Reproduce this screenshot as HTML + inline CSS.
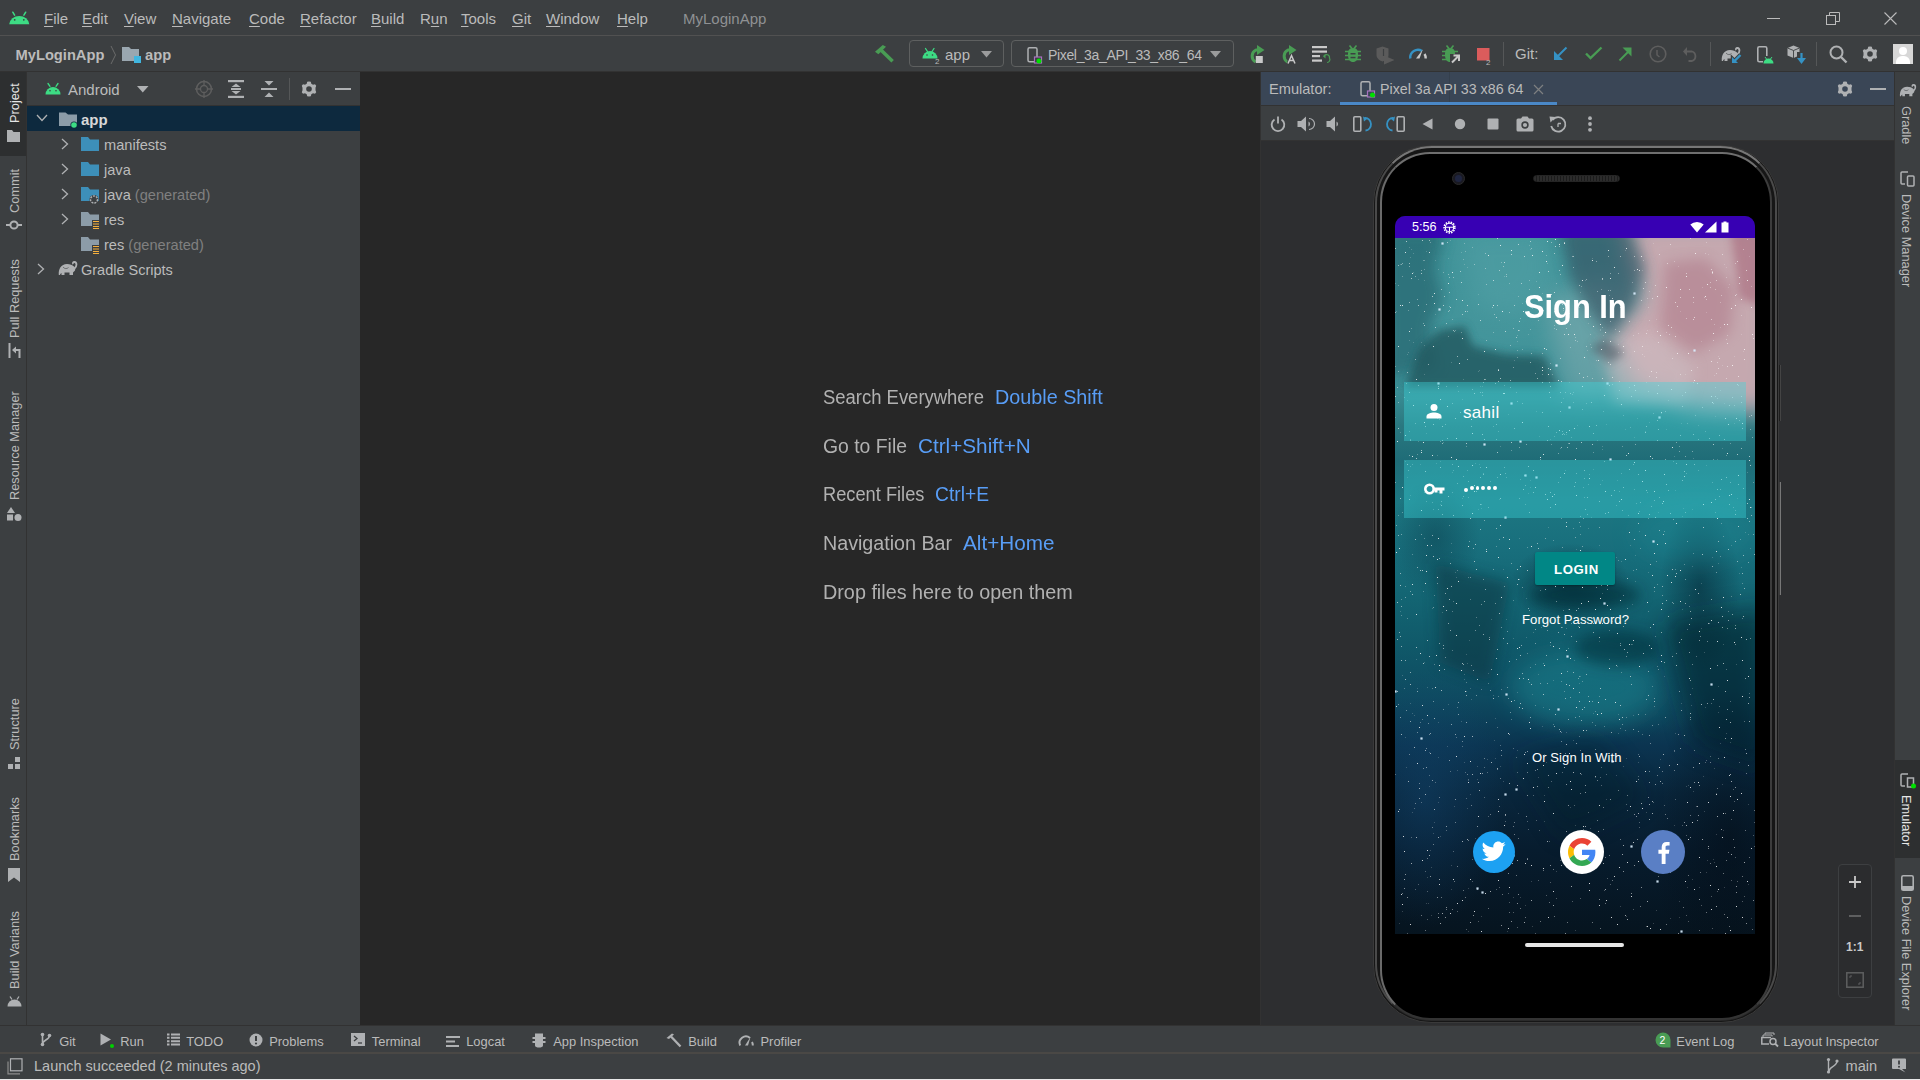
<!DOCTYPE html>
<html><head><meta charset="utf-8">
<style>
*{margin:0;padding:0;box-sizing:border-box}
html,body{width:1920px;height:1080px;overflow:hidden;background:#3c3f41;font-family:"Liberation Sans",sans-serif;color:#bbbbbb}
.a{position:absolute}
.t{position:absolute;font-size:15px;line-height:15px;white-space:nowrap}
.u{text-decoration:underline;text-underline-offset:2px}
svg{position:absolute;overflow:visible}
</style></head><body>
<!-- regions -->
<div class="a" id="menubar" style="left:0;top:0;width:1920px;height:35px;background:#3c3f41"></div>
<div class="a" style="left:0;top:35px;width:1920px;height:1px;background:#515151"></div>
<div class="a" id="navbar" style="left:0;top:36px;width:1920px;height:35px;background:#3c3f41"></div>
<div class="a" style="left:0;top:71px;width:1920px;height:1px;background:#323232"></div>
<!-- left stripe -->
<div class="a" style="left:0;top:72px;width:26px;height:953px;background:#3c3f41"></div>
<div class="a" style="left:0;top:72px;width:26px;height:84px;background:#2d2f30"></div>
<div class="a" style="left:26px;top:72px;width:1px;height:953px;background:#323232"></div>
<!-- project panel -->
<div class="a" style="left:27px;top:72px;width:333px;height:953px;background:#3c3f41"></div>
<div class="a" style="left:27px;top:105px;width:333px;height:1px;background:#323232"></div>
<div class="a" style="left:27px;top:106px;width:333px;height:25px;background:#0d293e"></div>
<!-- editor -->
<div class="a" style="left:360px;top:72px;width:900px;height:953px;background:#272727"></div>
<div class="a" style="left:1260px;top:72px;width:1px;height:953px;background:#323232"></div>
<!-- emulator panel -->
<div class="a" style="left:1261px;top:72px;width:633px;height:33px;background:#3a4656"></div>
<div class="a" style="left:1261px;top:105px;width:633px;height:1px;background:#323232"></div>
<div class="a" style="left:1261px;top:106px;width:633px;height:34px;background:#3c3f41"></div>
<div class="a" style="left:1261px;top:140px;width:633px;height:1px;background:#323232"></div>
<div class="a" style="left:1261px;top:141px;width:633px;height:884px;background:#2d2e30"></div>
<div class="a" style="left:1894px;top:72px;width:1px;height:953px;background:#323232"></div>
<!-- right stripe -->
<div class="a" style="left:1895px;top:72px;width:25px;height:953px;background:#3c3f41"></div>
<!-- bottom -->
<div class="a" style="left:0;top:1025px;width:1920px;height:1px;background:#323232"></div>
<div class="a" style="left:0;top:1026px;width:1920px;height:26px;background:#3c3f41"></div>
<div class="a" style="left:0;top:1052px;width:1920px;height:2px;background:#4a4845"></div>
<div class="a" style="left:0;top:1054px;width:1920px;height:25px;background:#3c3f41"></div>
<div class="a" style="left:0;top:1079px;width:1920px;height:1px;background:#e8e8e8"></div>

<!-- menubar content -->
<svg style="left:9px;top:11px" width="21" height="14" viewBox="0 0 21 14"><path d="M3.8 1.2 L5.6 4.2 M16.7 1.2 L14.9 4.2" stroke="#3ddc84" stroke-width="1.5" stroke-linecap="round"/><path d="M0.2 13.3 A10.1 9.3 0 0 1 20.3 13.3 Z" fill="#3ddc84"/><circle cx="5.7" cy="8.8" r="0.9" fill="#3c3f41"/><circle cx="14.8" cy="8.8" r="0.9" fill="#3c3f41"/></svg>
<div class="t" style="left:44px;top:11px"><span class="u">F</span>ile</div>
<div class="t" style="left:82px;top:11px"><span class="u">E</span>dit</div>
<div class="t" style="left:124px;top:11px"><span class="u">V</span>iew</div>
<div class="t" style="left:172px;top:11px"><span class="u">N</span>avigate</div>
<div class="t" style="left:249px;top:11px"><span class="u">C</span>ode</div>
<div class="t" style="left:300px;top:11px"><span class="u">R</span>efactor</div>
<div class="t" style="left:371px;top:11px"><span class="u">B</span>uild</div>
<div class="t" style="left:420px;top:11px">R<span class="u">u</span>n</div>
<div class="t" style="left:461px;top:11px"><span class="u">T</span>ools</div>
<div class="t" style="left:512px;top:11px"><span class="u">G</span>it</div>
<div class="t" style="left:546px;top:11px"><span class="u">W</span>indow</div>
<div class="t" style="left:617px;top:11px"><span class="u">H</span>elp</div>
<div class="t" style="left:683px;top:11px;color:#8f9193">MyLoginApp</div>
<svg style="left:1767px;top:18px" width="13" height="1"><rect width="13" height="1" fill="#bbb"/></svg>
<svg style="left:1826px;top:12px" width="14" height="13" viewBox="0 0 14 13"><rect x="0.5" y="3.5" width="9" height="9" fill="none" stroke="#bbb"/><path d="M3.5 3.5 V0.5 H13.5 V9.5 H9.5" fill="none" stroke="#bbb"/></svg>
<svg style="left:1884px;top:12px" width="13" height="13" viewBox="0 0 13 13"><path d="M0.5 0.5 L12.5 12.5 M12.5 0.5 L0.5 12.5" stroke="#bbb" stroke-width="1.1"/></svg>

<!-- navbar content -->
<div class="t" style="left:15.5px;top:48px;font-weight:bold;font-size:14.7px">MyLoginApp</div>
<svg style="left:110px;top:45px" width="7" height="20" viewBox="0 0 7 20"><path d="M1 1 L5.5 10 L1 19" fill="none" stroke="#6b6b6b" stroke-width="1"/></svg>
<svg style="left:122px;top:46px" width="20" height="18" viewBox="0 0 20 18"><path d="M0 1 H7 L9 3 H17 V15 H0 Z" fill="#9aa7b0"/><rect x="12" y="10" width="7" height="7" fill="#40b6e0"/></svg>
<div class="t" style="left:145px;top:48px;font-weight:bold;font-size:14.7px">app</div>
<!-- hammer -->
<svg style="left:875px;top:45px" width="20" height="18" viewBox="0 0 20 18"><path d="M0 6.8 L7.8 0 L11 1.8 L3.4 9.2 Z" fill="#499c54"/><path d="M6.2 5.2 L17.6 16.2" stroke="#499c54" stroke-width="3.6"/></svg>
<!-- app combo -->
<div class="a" style="left:909px;top:40px;width:95px;height:27px;border:1.5px solid #5e6060;border-radius:4px"></div>
<svg style="left:922px;top:48px" width="17" height="16" viewBox="0 0 17 16"><path d="M3.5 0.5 L5.5 3.5 M12 0.5 L10 3.5" stroke="#3ddc84" stroke-width="1.3" stroke-linecap="round"/><path d="M0.5 10.5 A7.5 7.5 0 0 1 15.5 10.5 Z" fill="#3ddc84"/><circle cx="5" cy="7" r="0.8" fill="#3c3f41"/><circle cx="10.5" cy="7" r="0.8" fill="#3c3f41"/><text x="13" y="15.5" font-size="8" fill="#bbb" font-family="Liberation Sans">2</text></svg>
<div class="t" style="left:945px;top:47px">app</div>
<svg style="left:981px;top:51px" width="12" height="7" viewBox="0 0 12 7"><path d="M0 0 H11 L5.5 6.5 Z" fill="#9a9b9c"/></svg>
<!-- device combo -->
<div class="a" style="left:1011px;top:40px;width:223px;height:27px;border:1.5px solid #5e6060;border-radius:4px"></div>
<svg style="left:1027px;top:47px" width="16" height="18" viewBox="0 0 16 18"><rect x="1" y="0.8" width="9" height="14" rx="1.5" fill="none" stroke="#afb1b3" stroke-width="1.5"/><rect x="7.5" y="10" width="7" height="6" fill="#3c3f41" stroke="#a771bf" stroke-width="1.2"/><circle cx="12" cy="14" r="2.5" fill="#00e000"/></svg>
<div class="t" style="left:1048px;top:48px;font-size:14px;letter-spacing:-0.34px">Pixel_3a_API_33_x86_64</div>
<svg style="left:1210px;top:51px" width="12" height="7" viewBox="0 0 12 7"><path d="M0 0 H11 L5.5 6.5 Z" fill="#9a9b9c"/></svg>
<!-- toolbar icons -->
<svg style="left:1247px;top:45px" width="18" height="19" viewBox="0 0 18 19"><path d="M8.5 17 A6.8 6.8 0 0 1 9 5 H11" fill="none" stroke="#499c54" stroke-width="3"/><path d="M10 0 L17.5 5 L10 10 Z" fill="#499c54"/><rect x="8.8" y="11" width="7" height="7" fill="#c9c9c9"/></svg>
<svg style="left:1279px;top:45px" width="18" height="19" viewBox="0 0 18 19"><path d="M8.5 17 A6.8 6.8 0 0 1 9 5 H11" fill="none" stroke="#499c54" stroke-width="3"/><path d="M10 0 L17.5 5 L10 10 Z" fill="#499c54"/><rect x="8.5" y="10.5" width="8" height="8" fill="#3c3f41"/><path d="M9 18.5 L12.5 10.5 L16 18.5 M10.3 15.5 H14.7" fill="none" stroke="#c9c9c9" stroke-width="1.5"/></svg>
<svg style="left:1312px;top:46px" width="19" height="18" viewBox="0 0 19 18"><rect x="0" y="0" width="15" height="2.2" fill="#c9c9c9"/><rect x="0" y="4.5" width="15" height="2.2" fill="#c9c9c9"/><rect x="0" y="9" width="8" height="2.2" fill="#c9c9c9"/><rect x="0" y="13.5" width="10" height="2.2" fill="#c9c9c9"/><path d="M12 10 A3 3 0 0 1 17.5 12 A3 3 0 0 1 15 16.5" fill="none" stroke="#499c54" stroke-width="1.2"/><path d="M11 10.2 L13.5 8 L13.5 12.5 Z" fill="#499c54"/></svg>
<svg style="left:1345px;top:45px" width="16" height="18" viewBox="0 0 16 18"><path d="M4.5 0.5 L7 3.5 M11.5 0.5 L9 3.5" stroke="#499c54" stroke-width="1.6"/><path d="M8 3 C3.5 3 3 6 3 10 C3 14.5 5 17 8 17 C11 17 13 14.5 13 10 C13 6 12.5 3 8 3 Z" fill="#499c54"/><path d="M0 6.5 H16 M0 10.5 H16 M0 14.5 H16" stroke="#499c54" stroke-width="1.5"/><rect x="5.5" y="8" width="5" height="1.5" fill="#3c3f41"/><rect x="5.5" y="11.8" width="5" height="1.5" fill="#3c3f41"/></svg>
<svg style="left:1376px;top:46px" width="20" height="19" viewBox="0 0 20 19"><path d="M0.5 2.5 L6.5 0.5 L12.5 2.5 V9 C12.5 12 10 14.5 6.5 15.5 C3 14.5 0.5 12 0.5 9 Z" fill="#5b5b5b"/><path d="M8 9.5 L18.5 14 L8 18.5 Z" fill="#5b5b5b"/><path d="M7.5 3 V10" stroke="#3c3f41" stroke-width="1.2"/></svg>
<svg style="left:1409px;top:47px" width="18" height="12" viewBox="0 0 18 12"><path d="M1.3 11.5 A7.7 7.7 0 0 1 13 4" fill="none" stroke="#3592c4" stroke-width="2.4"/><path d="M16.7 11.5 A7.7 7.7 0 0 0 15.5 7" fill="none" stroke="#c9c9c9" stroke-width="2.4"/><path d="M7 11.5 L13.8 2.5 L10.5 11.5 Z" fill="#c9c9c9"/></svg>
<svg style="left:1442px;top:45px" width="19" height="19" viewBox="0 0 19 19"><path d="M4.5 0.5 L7 3.5 M11.5 0.5 L9 3.5" stroke="#499c54" stroke-width="1.6"/><path d="M8 3 C3.5 3 3 6 3 10 C3 14.5 5 17 8 17 C11 17 13 14.5 13 10 C13 6 12.5 3 8 3 Z" fill="#499c54"/><path d="M0 6.5 H16 M0 10.5 H8 M0 14.5 H8" stroke="#499c54" stroke-width="1.5"/><rect x="8" y="9" width="11" height="10" fill="#3c3f41"/><path d="M10 17.5 L16.5 11 M11.5 10.5 H17 V16" fill="none" stroke="#c9c9c9" stroke-width="2"/></svg>
<svg style="left:1477px;top:48px" width="14" height="17" viewBox="0 0 14 17"><rect x="0" y="0" width="12.5" height="12.5" fill="#db5c5c"/><text x="9" y="16.5" font-size="8" fill="#bbb" font-family="Liberation Sans">2</text></svg>
<div class="a" style="left:1503px;top:42px;width:1px;height:24px;background:#555758"></div>
<div class="t" style="left:1515px;top:46px">Git:</div>
<svg style="left:1553px;top:46px" width="15" height="15" viewBox="0 0 15 15"><path d="M13.5 1.5 L3 12" stroke="#3592c4" stroke-width="2"/><path d="M1 5 V14 H10 Z" fill="#3592c4"/></svg>
<svg style="left:1585px;top:46px" width="18" height="15" viewBox="0 0 18 15"><path d="M1 7.5 L5.5 12 L16.5 1.5" fill="none" stroke="#499c54" stroke-width="2.4"/></svg>
<svg style="left:1618px;top:47px" width="15" height="15" viewBox="0 0 15 15"><path d="M1.5 13.5 L12 3" stroke="#499c54" stroke-width="2"/><path d="M4.5 0.5 H13.5 V9.5 Z" fill="#499c54"/></svg>
<svg style="left:1649px;top:45px" width="18" height="18" viewBox="0 0 18 18"><circle cx="9" cy="9" r="7.8" fill="none" stroke="#5e5e5e" stroke-width="1.6"/><path d="M8 5 V10 L10.5 12" fill="none" stroke="#5e5e5e" stroke-width="1.5"/></svg>
<svg style="left:1683px;top:45px" width="16" height="17" viewBox="0 0 16 17"><path d="M3 6.5 H9 A5 5 0 0 1 9 16 H5.5" fill="none" stroke="#5e5e5e" stroke-width="1.8"/><path d="M0 6.5 L4 2 V11 Z" fill="#5e5e5e"/></svg>
<div class="a" style="left:1710px;top:42px;width:1px;height:24px;background:#555758"></div>
<svg style="left:1721px;top:46px" width="20" height="18" viewBox="0 0 20 18"><path d="M0.8 15 C0.3 9 3 4 9 4 C12 4 14.5 5 16 6.5 C17 7.5 17.5 9 17 10.5 L15 12.5 V15 H11.5 V12.5 H6.5 V15 H3.5 V13 C2.5 13.5 2 14.2 2 15 Z" fill="#afb1b3"/><path d="M16.5 8.5 C19.2 6.5 19 2.2 16.5 2 C15 1.9 14.5 3.2 15.3 4" fill="none" stroke="#afb1b3" stroke-width="1.8"/><path d="M5 7 C6.5 9 9 9 10.5 7.5" fill="none" stroke="#3c3f41" stroke-width="0.6"/><path d="M19.5 9 L13 15.5" stroke="#3c3f41" stroke-width="4.5"/><path d="M10.5 10 V17.5 H18 Z" fill="#3c3f41" stroke="#3c3f41" stroke-width="1.5"/><path d="M19.5 9 L13 15.5" stroke="#3592c4" stroke-width="2.4"/><path d="M11 11 V17 H17 Z" fill="#3592c4"/></svg>
<svg style="left:1757px;top:46px" width="17" height="18" viewBox="0 0 17 18"><rect x="0.8" y="0.8" width="9" height="15" rx="1.5" fill="none" stroke="#afb1b3" stroke-width="1.6"/><rect x="6" y="10" width="11" height="8" fill="#3c3f41"/><path d="M6.5 17.5 A5 5 0 0 1 16.5 17.5 Z" fill="#3ddc84"/><path d="M8 11 L9.5 13 M15 11 L13.5 13" stroke="#3ddc84" stroke-width="1"/></svg>
<svg style="left:1787px;top:45px" width="20" height="20" viewBox="0 0 20 20"><path d="M6.5 0.5 L12.5 3 V10.5 L6.5 13 L0.5 10.5 V3 Z" fill="#afb1b3"/><path d="M0.5 3 L6.5 5.5 L12.5 3 M6.5 5.5 V13" fill="none" stroke="#3c3f41" stroke-width="0.9"/><rect x="10" y="7" width="10" height="13" fill="#3c3f41"/><path d="M14.5 8 V16" stroke="#3592c4" stroke-width="2.2"/><path d="M10 13 L14.5 19 L19 13 Z" fill="#3592c4"/></svg>
<div class="a" style="left:1816px;top:42px;width:1px;height:24px;background:#555758"></div>
<svg style="left:1829px;top:45px" width="19" height="19" viewBox="0 0 19 19"><circle cx="7.5" cy="7.5" r="6" fill="none" stroke="#afb1b3" stroke-width="2"/><path d="M12 12 L17.5 17.5" stroke="#afb1b3" stroke-width="2.4"/></svg>
<svg style="left:1862px;top:46px" width="16" height="16" viewBox="0 0 16 16"><path d="M8 0.5 L9.8 0.8 L10.3 2.8 L12 3.8 L14 3.2 L15.2 4.8 L14.5 6.8 V9.2 L15.2 11.2 L14 12.8 L12 12.2 L10.3 13.2 L9.8 15.2 L8 15.5 L6.2 15.2 L5.7 13.2 L4 12.2 L2 12.8 L0.8 11.2 L1.5 9.2 V6.8 L0.8 4.8 L2 3.2 L4 3.8 L5.7 2.8 L6.2 0.8 Z" fill="#afb1b3"/><circle cx="8" cy="8" r="2.8" fill="#3c3f41"/></svg>
<div class="a" style="left:1893px;top:44px;width:20px;height:20px;background:#d7d7d7;overflow:hidden"><div class="a" style="left:6px;top:3px;width:8px;height:8px;border-radius:50%;background:#fff"></div><div class="a" style="left:3px;top:12px;width:14px;height:10px;border-radius:6px 6px 0 0;background:#fff"></div></div>

<!-- left stripe content -->
<div class="t" style="left:9px;top:122.5px;transform-origin:0 0;transform:rotate(-90deg);font-size:12.8px;line-height:12.8px;color:#e6e6e6">Project</div>
<div class="t" style="left:9px;top:212.5px;transform-origin:0 0;transform:rotate(-90deg);font-size:12.8px;line-height:12.8px">Commit</div>
<div class="t" style="left:9px;top:337.5px;transform-origin:0 0;transform:rotate(-90deg);font-size:12.8px;line-height:12.8px">Pull Requests</div>
<div class="t" style="left:9px;top:500.0px;transform-origin:0 0;transform:rotate(-90deg);font-size:12.8px;line-height:12.8px">Resource Manager</div>
<div class="t" style="left:9px;top:749.6px;transform-origin:0 0;transform:rotate(-90deg);font-size:12.8px;line-height:12.8px">Structure</div>
<div class="t" style="left:9px;top:860.7px;transform-origin:0 0;transform:rotate(-90deg);font-size:12.8px;line-height:12.8px">Bookmarks</div>
<div class="t" style="left:9px;top:989.0px;transform-origin:0 0;transform:rotate(-90deg);font-size:12.8px;line-height:12.8px">Build Variants</div>
<svg style="left:7px;top:130px" width="13" height="12" viewBox="0 0 13 12"><path d="M0 0 H5 L6.5 2 H13 V12 H0 Z" fill="#afb1b3"/></svg>
<svg style="left:6px;top:219px" width="16" height="12" viewBox="0 0 16 12"><circle cx="8" cy="6" r="3.6" fill="none" stroke="#afb1b3" stroke-width="2"/><path d="M0 6 H4 M12 6 H16" stroke="#afb1b3" stroke-width="2"/></svg>
<svg style="left:8px;top:343px" width="13" height="15" viewBox="0 0 13 15"><path d="M1.5 0 V15" stroke="#afb1b3" stroke-width="2"/><path d="M11.5 15 V7 H5" fill="none" stroke="#afb1b3" stroke-width="2"/><path d="M4 3.5 L8 7 L4 10.5 Z" fill="#afb1b3" transform="rotate(180 6 7)"/></svg>
<svg style="left:7px;top:507px" width="15" height="14" viewBox="0 0 15 14"><path d="M4 0 L8 6 H0 Z" fill="#afb1b3"/><rect x="0" y="7.5" width="6" height="6" fill="#afb1b3"/><circle cx="11" cy="10.5" r="3.5" fill="#afb1b3"/></svg>
<svg style="left:8px;top:757px" width="13" height="13" viewBox="0 0 13 13"><rect x="7" y="0" width="5" height="5" fill="#afb1b3"/><rect x="0" y="7" width="5" height="5" fill="#afb1b3"/><rect x="7" y="7" width="5" height="5" fill="#afb1b3"/></svg>
<svg style="left:8px;top:868px" width="12" height="14" viewBox="0 0 12 14"><path d="M0 0 H12 V14 L6 9.5 L0 14 Z" fill="#afb1b3"/></svg>
<svg style="left:7px;top:996px" width="15" height="11" viewBox="0 0 15 11"><path d="M3 0.5 L5 3.5 M12 0.5 L10 3.5" stroke="#afb1b3" stroke-width="1.3"/><path d="M0.5 10.5 A7 7 0 0 1 14.5 10.5 Z" fill="#afb1b3"/></svg>
<!-- project panel header -->
<svg style="left:45px;top:83px" width="16" height="12" viewBox="0 0 16 12"><path d="M3 0.5 L5 3.3 M13 0.5 L11 3.3" stroke="#3ddc84" stroke-width="1.3" stroke-linecap="round"/><path d="M0.5 11.5 A7.5 7.5 0 0 1 15.5 11.5 Z" fill="#3ddc84"/><circle cx="5" cy="7.8" r="0.8" fill="#3c3f41"/><circle cx="11" cy="7.8" r="0.8" fill="#3c3f41"/></svg>
<div class="t" style="left:68px;top:82px">Android</div>
<svg style="left:137px;top:86px" width="12" height="7" viewBox="0 0 12 7"><path d="M0 0 H11.5 L5.75 6.5 Z" fill="#afb1b3"/></svg>
<svg style="left:195px;top:80px" width="18" height="18" viewBox="0 0 18 18"><circle cx="9" cy="9" r="7.5" fill="none" stroke="#5e5e5e" stroke-width="1.5"/><circle cx="9" cy="9" r="3.5" fill="none" stroke="#5e5e5e" stroke-width="1.3"/><path d="M9 0 V5 M9 13 V18 M0 9 H5 M13 9 H18" stroke="#5e5e5e" stroke-width="1.3"/></svg>
<svg style="left:228px;top:80px" width="16" height="18" viewBox="0 0 16 18"><rect x="0" y="0" width="16" height="2.2" fill="#afb1b3"/><rect x="0" y="15.8" width="16" height="2.2" fill="#afb1b3"/><path d="M3.5 7 L8 3.5 L12.5 7 Z M3.5 11 L8 14.5 L12.5 11 Z" fill="#afb1b3"/><rect x="3" y="8" width="10" height="2" fill="#afb1b3"/></svg>
<svg style="left:261px;top:80px" width="16" height="18" viewBox="0 0 16 18"><rect x="0" y="8" width="16" height="2" fill="#afb1b3"/><path d="M3.5 1 L8 5.5 L12.5 1 Z M3.5 17 L8 12.5 L12.5 17 Z" fill="#afb1b3"/></svg>
<div class="a" style="left:289px;top:78px;width:1px;height:22px;background:#555758"></div>
<svg style="left:301px;top:81px" width="16" height="16" viewBox="0 0 16 16"><path d="M8 0.5 L9.8 0.8 L10.3 2.8 L12 3.8 L14 3.2 L15.2 4.8 L14.5 6.8 V9.2 L15.2 11.2 L14 12.8 L12 12.2 L10.3 13.2 L9.8 15.2 L8 15.5 L6.2 15.2 L5.7 13.2 L4 12.2 L2 12.8 L0.8 11.2 L1.5 9.2 V6.8 L0.8 4.8 L2 3.2 L4 3.8 L5.7 2.8 L6.2 0.8 Z" fill="#afb1b3"/><circle cx="8" cy="8" r="2.8" fill="#3c3f41"/></svg>
<div class="a" style="left:335px;top:88px;width:16px;height:2px;background:#afb1b3"></div>
<!-- tree -->
<svg style="left:36px;top:114px" width="12" height="8" viewBox="0 0 12 8"><path d="M1 1 L6 6.5 L11 1" fill="none" stroke="#afb1b3" stroke-width="1.3"/></svg>
<svg style="left:59px;top:112px" width="20" height="17" viewBox="0 0 20 17"><path d="M0 0.5 H6.5 L9 2.5 H18 V14 H0 Z" fill="#8c9ca8"/><circle cx="15" cy="13" r="3.6" fill="#0d293e"/><circle cx="15" cy="13" r="2.8" fill="#3ddc84"/></svg>
<div class="t" style="left:81px;top:112px;font-weight:bold;color:#d8d8d8">app</div>
<svg style="left:61px;top:138px" width="8" height="12" viewBox="0 0 8 12"><path d="M1 1 L6.5 6 L1 11" fill="none" stroke="#afb1b3" stroke-width="1.3"/></svg>
<svg style="left:81px;top:137px" width="20" height="17" viewBox="0 0 20 17"><path d="M0 0 H7 L9 2.5 H18 V14 H0 Z" fill="#3d8fb9"/></svg>
<div class="t" style="left:104px;top:138px;font-size:14.6px">manifests<span style="color:#808080"></span></div>
<svg style="left:61px;top:163px" width="8" height="12" viewBox="0 0 8 12"><path d="M1 1 L6.5 6 L1 11" fill="none" stroke="#afb1b3" stroke-width="1.3"/></svg>
<svg style="left:81px;top:162px" width="20" height="17" viewBox="0 0 20 17"><path d="M0 0 H7 L9 2.5 H18 V14 H0 Z" fill="#3d8fb9"/></svg>
<div class="t" style="left:104px;top:163px;font-size:14.6px">java<span style="color:#808080"></span></div>
<svg style="left:61px;top:188px" width="8" height="12" viewBox="0 0 8 12"><path d="M1 1 L6.5 6 L1 11" fill="none" stroke="#afb1b3" stroke-width="1.3"/></svg>
<svg style="left:81px;top:187px" width="20" height="17" viewBox="0 0 20 17"><path d="M0 0 H7 L9 2.5 H18 V14 H0 Z" fill="#3d8fb9"/><circle cx="13" cy="12.5" r="4.5" fill="#3c3f41"/><circle cx="13" cy="12.5" r="3.5" fill="none" stroke="#afb1b3" stroke-width="1.4" stroke-dasharray="2 1"/></svg>
<div class="t" style="left:104px;top:188px;font-size:14.6px">java<span style="color:#808080"> (generated)</span></div>
<svg style="left:61px;top:213px" width="8" height="12" viewBox="0 0 8 12"><path d="M1 1 L6.5 6 L1 11" fill="none" stroke="#afb1b3" stroke-width="1.3"/></svg>
<svg style="left:81px;top:212px" width="20" height="17" viewBox="0 0 20 17"><path d="M0 0 H7 L9 2.5 H18 V14 H0 Z" fill="#8c9ca8"/><rect x="11" y="8" width="8" height="9" fill="#3c3f41"/><path d="M12 9.5 H18 M12 12 H18 M12 14.5 H18 M12 16.5 H18" stroke="#f4af3d" stroke-width="1.2"/></svg>
<div class="t" style="left:104px;top:213px;font-size:14.6px">res<span style="color:#808080"></span></div>
<svg style="left:81px;top:237px" width="20" height="17" viewBox="0 0 20 17"><path d="M0 0 H7 L9 2.5 H18 V14 H0 Z" fill="#8c9ca8"/><rect x="11" y="8" width="8" height="9" fill="#3c3f41"/><path d="M12 9.5 H18 M12 12 H18 M12 14.5 H18 M12 16.5 H18" stroke="#f4af3d" stroke-width="1.2"/></svg>
<div class="t" style="left:104px;top:238px;font-size:14.6px">res<span style="color:#808080"> (generated)</span></div>
<svg style="left:37px;top:263px" width="8" height="12" viewBox="0 0 8 12"><path d="M1 1 L6.5 6 L1 11" fill="none" stroke="#afb1b3" stroke-width="1.3"/></svg>
<svg style="left:58px;top:261px" width="20" height="16" viewBox="0 0 20 16"><g transform="translate(0,-1)"><path d="M0.8 15 C0.3 9 3 4 9 4 C12 4 14.5 5 16 6.5 C17 7.5 17.5 9 17 10.5 L15 12.5 V15 H11.5 V12.5 H6.5 V15 H3.5 V13 C2.5 13.5 2 14.2 2 15 Z" fill="#afb1b3"/><path d="M16.5 8.5 C19.2 6.5 19 2.2 16.5 2 C15 1.9 14.5 3.2 15.3 4" fill="none" stroke="#afb1b3" stroke-width="1.8"/><path d="M5 7 C6.5 9 9 9 10.5 7.5" fill="none" stroke="#3c3f41" stroke-width="0.6"/></g></svg>
<div class="t" style="left:81px;top:263px;font-size:14.5px">Gradle Scripts</div>

<!-- right stripe -->
<div class="a" style="left:1895px;top:760px;width:25px;height:98px;background:#2d2f30"></div>
<svg style="left:1899px;top:84px" width="18" height="14" viewBox="0 0 20 16"><g transform="translate(0,-1)"><path d="M0.8 15 C0.3 9 3 4 9 4 C12 4 14.5 5 16 6.5 C17 7.5 17.5 9 17 10.5 L15 12.5 V15 H11.5 V12.5 H6.5 V15 H3.5 V13 C2.5 13.5 2 14.2 2 15 Z" fill="#afb1b3"/><path d="M16.5 8.5 C19.2 6.5 19 2.2 16.5 2 C15 1.9 14.5 3.2 15.3 4" fill="none" stroke="#afb1b3" stroke-width="1.8"/><path d="M5 7 C6.5 9 9 9 10.5 7.5" fill="none" stroke="#3c3f41" stroke-width="0.6"/></g></svg>
<div class="t" style="left:1912px;top:106px;transform-origin:0 0;transform:rotate(90deg);font-size:12.8px;line-height:12.8px">Gradle</div>
<svg style="left:1900px;top:171px" width="15" height="16" viewBox="0 0 15 16"><path d="M8 1 H2 A1 1 0 0 0 1 2 V12 A1 1 0 0 0 2 13 H5" fill="none" stroke="#afb1b3" stroke-width="1.5"/><rect x="7.5" y="5" width="6.5" height="10" rx="1" fill="none" stroke="#afb1b3" stroke-width="1.5"/></svg>
<div class="t" style="left:1912px;top:193.5px;transform-origin:0 0;transform:rotate(90deg);font-size:12.8px;line-height:12.8px">Device Manager</div>
<svg style="left:1900px;top:773px" width="16" height="16" viewBox="0 0 16 16"><path d="M8 1 H2 A1 1 0 0 0 1 2 V12 A1 1 0 0 0 2 13 H5" fill="none" stroke="#afb1b3" stroke-width="1.5"/><rect x="7.5" y="5" width="6" height="9" fill="none" stroke="#afb1b3" stroke-width="1.5"/><circle cx="13.5" cy="13" r="2.5" fill="#00e000"/></svg>
<div class="t" style="left:1912px;top:795px;transform-origin:0 0;transform:rotate(90deg);font-size:12.8px;line-height:12.8px;color:#e6e6e6">Emulator</div>
<svg style="left:1901px;top:875px" width="13" height="16" viewBox="0 0 13 16"><rect x="0.8" y="0.8" width="11.4" height="14.4" rx="1.5" fill="none" stroke="#afb1b3" stroke-width="1.6"/><rect x="0.8" y="11" width="11.4" height="4" fill="#afb1b3"/></svg>
<div class="t" style="left:1912px;top:896px;transform-origin:0 0;transform:rotate(90deg);font-size:12.8px;line-height:12.8px">Device File Explorer</div>
<!-- editor hints -->
<div class="a" style="left:823.1px;top:388px;font-size:19.5px;line-height:19.5px;white-space:nowrap;color:#b1b1b1;transform-origin:0 0;transform:scaleX(0.9462)">Search Everywhere</div>
<div class="a" style="left:995.1px;top:388px;font-size:19.5px;line-height:19.5px;white-space:nowrap;color:#589df6;transform-origin:0 0;transform:scaleX(1.0139)">Double Shift</div>
<div class="a" style="left:823.1px;top:437px;font-size:19.5px;line-height:19.5px;white-space:nowrap;color:#b1b1b1;transform-origin:0 0;transform:scaleX(0.9938)">Go to File</div>
<div class="a" style="left:917.5px;top:437px;font-size:19.5px;line-height:19.5px;white-space:nowrap;color:#589df6;transform-origin:0 0;transform:scaleX(1.0621)">Ctrl+Shift+N</div>
<div class="a" style="left:823.1px;top:485px;font-size:19.5px;line-height:19.5px;white-space:nowrap;color:#b1b1b1;transform-origin:0 0;transform:scaleX(0.9357)">Recent Files</div>
<div class="a" style="left:934.9px;top:485px;font-size:19.5px;line-height:19.5px;white-space:nowrap;color:#589df6;transform-origin:0 0;transform:scaleX(0.9868)">Ctrl+E</div>
<div class="a" style="left:823.1px;top:534px;font-size:19.5px;line-height:19.5px;white-space:nowrap;color:#b1b1b1;transform-origin:0 0;transform:scaleX(1.0086)">Navigation Bar</div>
<div class="a" style="left:962.7px;top:534px;font-size:19.5px;line-height:19.5px;white-space:nowrap;color:#589df6;transform-origin:0 0;transform:scaleX(1.0620)">Alt+Home</div>
<div class="a" style="left:823.1px;top:583px;font-size:19.5px;line-height:19.5px;white-space:nowrap;color:#b1b1b1;transform-origin:0 0;transform:scaleX(1.0145)">Drop files here to open them</div>
<!-- emulator header -->
<div class="a" style="left:1449px;top:72px;width:1px;height:33px;background:#35404d"></div>
<div class="t" style="left:1269px;top:82px;font-size:14.6px">Emulator:</div>
<svg style="left:1360px;top:81px" width="17" height="17" viewBox="0 0 17 17"><rect x="1" y="0.8" width="9" height="14" rx="1.5" fill="none" stroke="#afb1b3" stroke-width="1.5"/><rect x="7.5" y="10" width="7" height="6" fill="#3a4656" stroke="#a771bf" stroke-width="1.2"/><circle cx="12.5" cy="14" r="2.5" fill="#00e000"/></svg>
<div class="t" style="left:1380px;top:82px;font-size:14.25px">Pixel 3a API 33 x86 64</div>
<svg style="left:1533px;top:84px" width="11" height="11" viewBox="0 0 11 11"><path d="M1 1 L10 10 M10 1 L1 10" stroke="#7d7f80" stroke-width="1.2"/></svg>
<div class="a" style="left:1340px;top:102px;width:217px;height:3px;background:#4a88c7"></div>
<svg style="left:1837px;top:81px" width="16" height="16" viewBox="0 0 16 16"><path d="M8 0.5 L9.8 0.8 L10.3 2.8 L12 3.8 L14 3.2 L15.2 4.8 L14.5 6.8 V9.2 L15.2 11.2 L14 12.8 L12 12.2 L10.3 13.2 L9.8 15.2 L8 15.5 L6.2 15.2 L5.7 13.2 L4 12.2 L2 12.8 L0.8 11.2 L1.5 9.2 V6.8 L0.8 4.8 L2 3.2 L4 3.8 L5.7 2.8 L6.2 0.8 Z" fill="#afb1b3"/><circle cx="8" cy="8" r="2.8" fill="#3a4656"/></svg>
<div class="a" style="left:1870px;top:88px;width:16px;height:2px;background:#afb1b3"></div>

<!-- emulator toolbar -->
<svg style="left:1270px;top:116px" width="16" height="16" viewBox="0 0 16 16"><path d="M4.5 3.5 A6.3 6.3 0 1 0 11.5 3.5" fill="none" stroke="#afb1b3" stroke-width="1.8"/><path d="M8 0.5 V7.5" stroke="#afb1b3" stroke-width="1.8"/></svg>
<svg style="left:1297px;top:116px" width="18" height="16" viewBox="0 0 18 16"><path d="M0.5 5 H4 L9 0.5 V15.5 L4 11 H0.5 Z" fill="#afb1b3"/><path d="M11.5 5.5 A2.8 2.8 0 0 1 11.5 10.5 Z" fill="#afb1b3"/><path d="M12 2.5 A5.5 5.5 0 0 1 12 13.5" fill="none" stroke="#afb1b3" stroke-width="1.2"/></svg>
<svg style="left:1326px;top:116px" width="13" height="16" viewBox="0 0 13 16"><path d="M0.5 5 H4 L9 0.5 V15.5 L4 11 H0.5 Z" fill="#afb1b3"/><path d="M10.5 5.5 A2.8 2.8 0 0 1 10.5 10.5 Z" fill="#afb1b3"/></svg>
<svg style="left:1353px;top:116px" width="19" height="16" viewBox="0 0 19 16"><rect x="0.8" y="0.8" width="7" height="14.4" rx="1" fill="none" stroke="#afb1b3" stroke-width="1.6"/><path d="M12 2 A5.5 6 0 0 1 12.5 14.5" fill="none" stroke="#3592c4" stroke-width="1.8"/><path d="M10 0.5 L14.5 2.5 L11 5.5 Z" fill="#3592c4"/></svg>
<svg style="left:1386px;top:116px" width="19" height="16" viewBox="0 0 19 16"><rect x="11.2" y="0.8" width="7" height="14.4" rx="1" fill="none" stroke="#afb1b3" stroke-width="1.6"/><path d="M7 2 A5.5 6 0 0 0 6.5 14.5" fill="none" stroke="#3592c4" stroke-width="1.8"/><path d="M9 0.5 L4.5 2.5 L8 5.5 Z" fill="#3592c4"/></svg>
<svg style="left:1422px;top:118px" width="11" height="12" viewBox="0 0 11 12"><path d="M10.5 0.5 V11.5 L0.5 6 Z" fill="#afb1b3"/></svg>
<svg style="left:1454px;top:118px" width="12" height="12" viewBox="0 0 12 12"><circle cx="6" cy="6" r="5.2" fill="#afb1b3"/></svg>
<svg style="left:1487px;top:118px" width="12" height="12" viewBox="0 0 12 12"><rect x="0.5" y="0.5" width="11" height="11" rx="1" fill="#afb1b3"/></svg>
<svg style="left:1516px;top:116px" width="18" height="16" viewBox="0 0 18 16"><path d="M0.5 4 A1.5 1.5 0 0 1 2 2.5 H5 L6.5 0.5 H11.5 L13 2.5 H16 A1.5 1.5 0 0 1 17.5 4 V14 A1.5 1.5 0 0 1 16 15.5 H2 A1.5 1.5 0 0 1 0.5 14 Z" fill="#afb1b3"/><circle cx="9" cy="9" r="3.7" fill="#3c3f41"/><circle cx="9" cy="9" r="2.1" fill="#afb1b3"/></svg>
<svg style="left:1549px;top:115px" width="18" height="18" viewBox="0 0 18 18"><path d="M3.5 5 A7.2 7.2 0 1 1 2.2 11" fill="none" stroke="#afb1b3" stroke-width="1.8"/><path d="M0.5 1.5 L6.5 2 L1.5 7.5 Z" fill="#afb1b3"/><path d="M9 8.5 H12 M9 8.5 V12" stroke="#afb1b3" stroke-width="1.3"/></svg>
<svg style="left:1587px;top:116px" width="6" height="16" viewBox="0 0 6 16"><circle cx="3" cy="2.2" r="1.9" fill="#afb1b3"/><circle cx="3" cy="8" r="1.9" fill="#afb1b3"/><circle cx="3" cy="13.8" r="1.9" fill="#afb1b3"/></svg>
<!-- zoom controls -->
<div class="a" style="left:1838px;top:864px;width:34px;height:134px;border:1px solid #3d3f41;border-radius:4px;background:#2b2c2e"></div>
<svg style="left:1848px;top:875px" width="14" height="14" viewBox="0 0 14 14"><path d="M7 1 V13 M1 7 H13" stroke="#c9c9c9" stroke-width="1.8"/></svg>
<div class="a" style="left:1849px;top:915px;width:12px;height:1.5px;background:#5e5f60"></div>
<div class="t" style="left:1846px;top:941px;font-size:12px;line-height:12px;font-weight:bold;color:#c9c9c9">1:1</div>
<svg style="left:1846px;top:972px" width="18" height="16" viewBox="0 0 18 16"><rect x="0.8" y="0.8" width="16.4" height="14.4" fill="none" stroke="#5e5f60" stroke-width="1.5"/><path d="M4 6 V4 H6 M14 10 V12 H12" fill="none" stroke="#5e5f60" stroke-width="1"/></svg>
<!-- bottom toolbar -->
<svg style="left:40px;top:1032px" width="12" height="15" viewBox="0 0 12 15"><circle cx="2.5" cy="2.5" r="1.8" fill="#afb1b3"/><circle cx="9.5" cy="3.5" r="1.8" fill="#afb1b3"/><circle cx="2.5" cy="12.5" r="1.8" fill="#afb1b3"/><path d="M2.5 2.5 V12.5 M9.5 3.5 C9.5 8 2.5 8 2.5 12" fill="none" stroke="#afb1b3" stroke-width="1.6"/></svg>
<div class="t" style="left:59.2px;top:1035.5px;font-size:12.9px;line-height:12.9px">Git</div>
<svg style="left:100px;top:1033px" width="14" height="16" viewBox="0 0 14 16"><path d="M0.5 0.5 L11 6.5 L0.5 12.5 Z" fill="#afb1b3"/><circle cx="12" cy="13" r="2.6" fill="#3c3f41"/><circle cx="12" cy="13" r="2" fill="#00d000"/></svg>
<div class="t" style="left:120.2px;top:1035.5px;font-size:12.9px;line-height:12.9px">Run</div>
<svg style="left:167px;top:1034px" width="13" height="12" viewBox="0 0 13 12"><path d="M0 0.5 H2.5 M0 3.8 H2.5 M0 7.2 H2.5 M0 10.5 H2.5" stroke="#afb1b3" stroke-width="2"/><path d="M4 0.5 H13 M4 3.8 H13 M4 7.2 H13 M4 10.5 H13" stroke="#afb1b3" stroke-width="2"/></svg>
<div class="t" style="left:186.2px;top:1035.5px;font-size:12.9px;line-height:12.9px">TODO</div>
<svg style="left:249px;top:1033px" width="14" height="14" viewBox="0 0 14 14"><circle cx="7" cy="7" r="6.5" fill="#afb1b3"/><path d="M7 3 V8" stroke="#3c3f41" stroke-width="2"/><circle cx="7" cy="10.5" r="1.1" fill="#3c3f41"/></svg>
<div class="t" style="left:269.2px;top:1035.5px;font-size:12.9px;line-height:12.9px">Problems</div>
<svg style="left:351px;top:1033px" width="15" height="14" viewBox="0 0 15 14"><rect x="0" y="0" width="14" height="13" fill="#afb1b3"/><path d="M3 3 L6 5.5 L3 8" fill="none" stroke="#3c3f41" stroke-width="1.3"/><path d="M7 10 H11" stroke="#3c3f41" stroke-width="1.3"/></svg>
<div class="t" style="left:371.8px;top:1035.5px;font-size:12.9px;line-height:12.9px">Terminal</div>
<svg style="left:446px;top:1036px" width="14" height="11" viewBox="0 0 14 11"><path d="M0 1 H14 M0 5.5 H9 M0 10 H13" stroke="#afb1b3" stroke-width="2"/></svg>
<div class="t" style="left:466.2px;top:1035.5px;font-size:12.9px;line-height:12.9px">Logcat</div>
<svg style="left:532px;top:1033px" width="14" height="15" viewBox="0 0 14 15"><path d="M3 0.5 H11 V4 H13.5 V6 H11 V8 H13.5 V10 H11 V12.5 C11 14 9 14.5 7 14.5 C5 14.5 3 14 3 12.5 V10 H0.5 V8 H3 V6 H0.5 V4 H3 Z" fill="#afb1b3"/></svg>
<div class="t" style="left:553.2px;top:1035.5px;font-size:12.9px;line-height:12.9px">App Inspection</div>
<svg style="left:666px;top:1033px" width="16" height="15" viewBox="0 0 16 15"><path d="M0.5 5 L6 0.5 L8 1.5 L3 6 Z" fill="#afb1b3"/><path d="M5 3.5 L14.5 13.5" stroke="#afb1b3" stroke-width="2.3"/></svg>
<div class="t" style="left:688.2px;top:1035.5px;font-size:12.9px;line-height:12.9px">Build</div>
<svg style="left:739px;top:1035px" width="15" height="11" viewBox="0 0 15 11"><path d="M1.2 10.5 A6.3 6.3 0 0 1 11 3" fill="none" stroke="#afb1b3" stroke-width="2"/><path d="M13.8 10.5 A6.3 6.3 0 0 0 13 7" fill="none" stroke="#afb1b3" stroke-width="2"/><path d="M6 10.5 L11.5 2 L9 10.5 Z" fill="#afb1b3"/></svg>
<div class="t" style="left:760.5px;top:1035.5px;font-size:12.9px;line-height:12.9px">Profiler</div>
<svg style="left:1655px;top:1032px" width="16" height="16" viewBox="0 0 16 16"><path d="M8 0.5 A7.5 7.5 0 0 0 0.5 8 A7.5 7.5 0 0 0 8 15.5 H15.5 V8 A7.5 7.5 0 0 0 8 0.5 Z" fill="#499c54"/><text x="4.6" y="12.3" font-size="10.5" fill="#fff" font-family="Liberation Sans">2</text></svg>
<div class="t" style="left:1676.3px;top:1035.5px;font-size:12.9px;line-height:12.9px">Event Log</div>
<svg style="left:1761px;top:1032px" width="18" height="16" viewBox="0 0 18 16"><path d="M4 2.5 V1 H13 V3 M2 5 V3 H11 V4.5" fill="none" stroke="#afb1b3" stroke-width="1"/><path d="M8 12 H0.8 V5.5 H10" fill="none" stroke="#afb1b3" stroke-width="1.5"/><circle cx="12" cy="9.5" r="3" fill="none" stroke="#afb1b3" stroke-width="1.5"/><path d="M14 11.5 L17 14.5" stroke="#afb1b3" stroke-width="1.8"/></svg>
<div class="t" style="left:1783.3px;top:1035.5px;font-size:12.9px;line-height:12.9px">Layout Inspector</div>
<!-- status bar -->
<svg style="left:7px;top:1058px" width="16" height="17" viewBox="0 0 16 17"><rect x="3.5" y="0.8" width="11.5" height="12" fill="none" stroke="#afb1b3" stroke-width="1.2"/><path d="M1 3.5 V15.8 H13" fill="none" stroke="#8c8c8c" stroke-width="1.2"/></svg>
<div class="t" style="left:34px;top:1059px;font-size:14.5px;line-height:14.5px">Launch succeeded (2 minutes ago)</div>
<svg style="left:1826px;top:1057px" width="13" height="17" viewBox="0 0 13 17"><circle cx="2.5" cy="2.5" r="1.6" fill="#afb1b3"/><circle cx="11" cy="4" r="1.6" fill="#afb1b3"/><circle cx="2.5" cy="15" r="1.6" fill="#afb1b3"/><path d="M2.5 2.5 V15 M11 4 C11 10 3 9 2.8 14.5" fill="none" stroke="#afb1b3" stroke-width="1.4"/></svg>
<div class="t" style="left:1845.5px;top:1059px;font-size:14.6px;line-height:14.6px">main</div>
<svg style="left:1891px;top:1058px" width="16" height="15" viewBox="0 0 16 15"><path d="M1 1.5 A1 1 0 0 1 2 0.5 H14 A1 1 0 0 1 15 1.5 V11 H11 L14.5 14.5 L8 11 H2 A1 1 0 0 1 1 10 Z" fill="#afb1b3"/><path d="M8 2.5 V6.5" stroke="#3c3f41" stroke-width="1.8"/><circle cx="8" cy="8.8" r="1" fill="#3c3f41"/></svg>

<!-- phone -->
<div class="a" style="left:1373px;top:145px;width:406px;height:878px;border-radius:58px;background:#161616;border:1px solid #3a3a3a"></div>
<div class="a" style="left:1375px;top:146px;width:402px;height:875px;border-radius:57px;border:2px solid #777;border-bottom-color:#2a2a2a;border-left-color:#4a4a4a;border-right-color:#4a4a4a"></div>
<div class="a" style="left:1380px;top:152px;width:392px;height:868px;border-radius:50px;background:#000;border:2px solid #6f6f6f;border-bottom-color:#333;border-right-color:#3c3c3c;border-left-color:#6a6a6a"></div>
<div class="a" style="left:1779px;top:365px;width:2px;height:56px;background:#1e1e1e;border-right:1px solid #444"></div>
<div class="a" style="left:1779px;top:482px;width:2px;height:113px;background:#3a3a3a;border-right:1px solid #777"></div>
<div class="a" style="left:1452px;top:172px;width:13px;height:13px;border-radius:50%;background:#1a1a22;border:1px solid #2a2a2a"></div>
<div class="a" style="left:1455px;top:175px;width:7px;height:7px;border-radius:50%;background:#1f2540"></div>
<div class="a" style="left:1533px;top:175px;width:87px;height:7px;border-radius:4px;background:repeating-linear-gradient(90deg,#2c2c2c 0 2px,#1c1c1c 2px 3px);border:1px solid #252525"></div>
<!-- screen -->
<div class="a" style="left:1395px;top:216px;width:360px;height:718px;overflow:hidden;border-radius:10px 10px 0 0;background:#0a2036">
  <div class="a" style="left:0;top:0;width:360px;height:22px;background:#3700b3"></div>
  <div class="a" style="left:0;top:22px;width:360px;height:696px;background:
    radial-gradient(ellipse 60px 40px at 175px 345px, rgba(4,30,42,0.55), rgba(4,30,42,0) 100%),
    radial-gradient(ellipse 40px 85px at 305px 350px, rgba(4,30,45,0.50), rgba(4,30,45,0) 100%),
    radial-gradient(ellipse 45px 60px at 40px 300px, rgba(8,50,65,0.40), rgba(8,50,65,0) 100%),
    radial-gradient(ellipse 100px 30px at 220px 470px, rgba(18,90,105,0.45), rgba(18,90,105,0) 100%),
    radial-gradient(ellipse 80px 130px at 30px 560px, rgba(20,75,120,0.40), rgba(20,75,120,0) 100%),
    radial-gradient(ellipse 80px 150px at 335px 600px, rgba(3,10,18,0.50), rgba(3,10,18,0) 100%),
    linear-gradient(180deg, #3f9298 0%, #44959b 14%, #3a8e95 22%, #2a7880 27%, #1f6c77 32%, #1d7782 38%, #186e7c 45%, #136472 52%, #105a6a 58%, #0e4a60 66%, #0b3450 73%, #09263c 80%, #071c2e 88%, #06141f 100%)"></div>
  <svg style="left:0;top:22px;overflow:hidden" width="360" height="696" viewBox="0 0 360 696">
    <defs>
      <filter id="bl4" x="-50%" y="-50%" width="200%" height="200%"><feGaussianBlur stdDeviation="4"/></filter>
      <filter id="bl7" x="-50%" y="-50%" width="200%" height="200%"><feGaussianBlur stdDeviation="7"/></filter>
      <filter id="bl12" x="-50%" y="-50%" width="200%" height="200%"><feGaussianBlur stdDeviation="12"/></filter>
    </defs>
    <path d="M-10 -10 H50 L40 30 L48 60 L35 90 L42 130 L-10 140 Z" fill="#286670" opacity="0.7" filter="url(#bl7)"/>
    <path d="M10 150 L25 110 L45 92 L70 88 L78 108 L110 116 L150 118 L165 150 Z" fill="#24585f" opacity="0.8" filter="url(#bl4)"/>
    <path d="M60 -10 H150 L160 40 L130 80 L80 70 Z" fill="#58a5aa" opacity="0.45" filter="url(#bl12)"/>
    <path d="M150 60 L210 40 L270 90 L260 160 L170 160 Z" fill="#93b3b7" opacity="0.45" filter="url(#bl12)"/>
    <path d="M225 -20 H380 V175 L300 170 L240 150 L215 100 L245 60 Z" fill="#d4abb2" opacity="0.9" filter="url(#bl12)"/>
    <path d="M205 105 L260 95 L300 130 L290 165 L220 165 Z" fill="#cdbfc4" opacity="0.5" filter="url(#bl7)"/>
    <path d="M165 -10 H235 L250 30 L238 70 L215 100 L195 75 L175 40 Z" fill="#34505e" opacity="0.62" filter="url(#bl7)"/>
    <path d="M270 25 L310 20 L340 50 L335 95 L300 115 L265 90 Z" fill="#a05a70" opacity="0.32" filter="url(#bl7)"/>
    <path d="M335 -10 H370 V70 L345 60 Z" fill="#9a4a62" opacity="0.4" filter="url(#bl4)"/>
    <path d="M195 110 L210 100 L230 115 L215 125 Z" fill="#3a4a55" opacity="0.5" filter="url(#bl4)"/>
    <ellipse cx="190" cy="450" rx="75" ry="38" fill="#1b8f9a" opacity="0.45" filter="url(#bl12)"/>
    <ellipse cx="300" cy="295" rx="60" ry="30" fill="#1b8a96" opacity="0.35" filter="url(#bl12)"/>
    <ellipse cx="190" cy="357" rx="55" ry="15" fill="#062a35" opacity="0.6" filter="url(#bl7)"/>
    <path d="M40 325 L115 345 L95 445 L45 425 Z" fill="#07303c" opacity="0.5" filter="url(#bl7)"/>
    <path d="M268 385 L370 370 L370 530 L300 505 Z" fill="#041c26" opacity="0.55" filter="url(#bl12)"/>
    <ellipse cx="222" cy="410" rx="42" ry="18" fill="#062b36" opacity="0.5" filter="url(#bl7)"/>
    <path d="M120 520 L200 500 L250 560 L170 600 Z" fill="#051c28" opacity="0.35" filter="url(#bl12)"/>
  </svg>
  <div class="a" style="left:0;top:22px;width:1px;height:1px;box-shadow:165px 154px 0 0 rgba(255,255,255,0.50),333px 49px 0 0 rgba(255,255,255,0.20),274px 96px 0 0 rgba(255,255,255,0.40),298px 59px 0 0 rgba(255,255,255,0.60),109px 38px 0 0 rgba(255,255,255,0.20),222px 428px 0 0 rgba(255,255,255,0.20),123px 92px 0 0 rgba(255,255,255,0.60),217px 60px 0 0 rgba(255,255,255,0.60),63px 228px 0 0 rgba(255,255,255,0.80),321px 596px 0 0 rgba(255,255,255,0.20),295px 599px 0 0 rgba(255,255,255,0.50),25px 226px 0 0 rgba(255,255,255,0.20),285px 136px 0 0 rgba(255,255,255,0.40),214px 147px 0 0 rgba(255,255,255,0.60),60px 584px 0 0 rgba(255,255,255,0.40),286px 185px 0 0 rgba(255,255,255,0.20),297px 584px 0 0 rgba(255,255,255,0.80),96px 381px 0 0 rgba(255,255,255,0.20),280px 64px 0 0 rgba(255,255,255,0.60),30px 633px 0 0 rgba(255,255,255,0.30),254px 544px 0 0 rgba(255,255,255,0.50),160px 476px 0 0 rgba(255,255,255,0.60),232px 370px 0 0 rgba(255,255,255,0.40),127px 184px 0 0 rgba(255,255,255,0.80),124px 83px 0 0 rgba(255,255,255,0.60),153px 537px 0 0 rgba(255,255,255,0.50),175px 459px 0 0 rgba(255,255,255,0.40),311px 74px 0 0 rgba(255,255,255,0.20),262px 428px 0 0 rgba(255,255,255,0.30),175px 155px 0 0 rgba(255,255,255,0.50),215px 40px 0 0 rgba(255,255,255,0.80),39px 571px 0 0 rgba(255,255,255,0.60),160px 348px 0 0 rgba(255,255,255,0.80),179px 608px 0 0 rgba(255,255,255,0.50),296px 467px 0 0 rgba(255,255,255,0.20),47px 276px 0 0 rgba(255,255,255,0.50),356px 680px 0 0 rgba(255,255,255,0.20),31px 317px 0 0 rgba(255,255,255,0.80),295px 456px 0 0 rgba(255,255,255,0.40),197px 684px 0 0 rgba(255,255,255,0.40),11px 472px 0 0 rgba(255,255,255,0.40),86px 625px 0 0 rgba(255,255,255,0.20),252px 60px 0 0 rgba(255,255,255,0.30),147px 132px 0 0 rgba(255,255,255,0.80),126px 407px 0 0 rgba(255,255,255,0.50),254px 82px 0 0 rgba(255,255,255,0.30),229px 411px 0 0 rgba(255,255,255,0.60),142px 140px 0 0 rgba(255,255,255,0.50),281px 285px 0 0 rgba(255,255,255,0.80),212px 367px 0 0 rgba(255,255,255,0.80),194px 236px 0 0 rgba(255,255,255,0.30),42px 180px 0 0 rgba(255,255,255,0.30),118px 674px 0 0 rgba(255,255,255,0.30),6px 496px 0 0 rgba(255,255,255,0.60),93px 269px 0 0 rgba(255,255,255,0.40),2px 149px 0 0 rgba(255,255,255,0.50),273px 378px 0 0 rgba(255,255,255,0.60),289px 326px 0 0 rgba(255,255,255,0.30),353px 527px 0 0 rgba(255,255,255,0.60),335px 692px 0 0 rgba(255,255,255,0.80),27px 467px 0 0 rgba(255,255,255,0.80),286px 401px 0 0 rgba(255,255,255,0.50),204px 403px 0 0 rgba(255,255,255,0.20),246px 649px 0 0 rgba(255,255,255,0.50),31px 195px 0 0 rgba(255,255,255,0.20),106px 451px 0 0 rgba(255,255,255,0.30),56px 348px 0 0 rgba(255,255,255,0.60),26px 104px 0 0 rgba(255,255,255,0.20),290px 154px 0 0 rgba(255,255,255,0.60),51px 372px 0 0 rgba(255,255,255,0.60),13px 72px 0 0 rgba(255,255,255,0.30),314px 385px 0 0 rgba(255,255,255,0.30),324px 258px 0 0 rgba(255,255,255,0.40),308px 372px 0 0 rgba(255,255,255,0.50),62px 118px 0 0 rgba(255,255,255,0.50),238px 491px 0 0 rgba(255,255,255,0.50),159px 87px 0 0 rgba(255,255,255,0.30),52px 350px 0 0 rgba(255,255,255,0.80),135px 490px 0 0 rgba(255,255,255,0.80),82px 528px 0 0 rgba(255,255,255,0.20),105px 540px 0 0 rgba(255,255,255,0.40),75px 556px 0 0 rgba(255,255,255,0.20),270px 305px 0 0 rgba(255,255,255,0.80),46px 267px 0 0 rgba(255,255,255,0.60),187px 171px 0 0 rgba(255,255,255,0.40),114px 545px 0 0 rgba(255,255,255,0.60),257px 337px 0 0 rgba(255,255,255,0.80),114px 627px 0 0 rgba(255,255,255,0.30),122px 410px 0 0 rgba(255,255,255,0.80),116px 204px 0 0 rgba(255,255,255,0.60),252px 364px 0 0 rgba(255,255,255,0.80),14px 28px 0 0 rgba(255,255,255,0.40),241px 265px 0 0 rgba(255,255,255,0.30),354px 619px 0 0 rgba(255,255,255,0.40),228px 357px 0 0 rgba(255,255,255,0.40),41px 225px 0 0 rgba(255,255,255,0.20),116px 481px 0 0 rgba(255,255,255,0.30),172px 209px 0 0 rgba(255,255,255,0.50),319px 624px 0 0 rgba(255,255,255,0.20),245px 668px 0 0 rgba(255,255,255,0.40),329px 86px 0 0 rgba(255,255,255,0.80),61px 397px 0 0 rgba(255,255,255,0.80),102px 489px 0 0 rgba(255,255,255,0.30),222px 651px 0 0 rgba(255,255,255,0.40),44px 405px 0 0 rgba(255,255,255,0.50),205px 86px 0 0 rgba(255,255,255,0.80),81px 174px 0 0 rgba(255,255,255,0.30),14px 154px 0 0 rgba(255,255,255,0.60),238px 671px 0 0 rgba(255,255,255,0.30),313px 610px 0 0 rgba(255,255,255,0.50),336px 358px 0 0 rgba(255,255,255,0.30),280px 561px 0 0 rgba(255,255,255,0.30),10px 14px 0 0 rgba(255,255,255,0.80),332px 105px 0 0 rgba(255,255,255,0.60),71px 444px 0 0 rgba(255,255,255,0.30),108px 28px 0 0 rgba(255,255,255,0.40),108px 299px 0 0 rgba(255,255,255,0.60),123px 600px 0 0 rgba(255,255,255,0.40),132px 557px 0 0 rgba(255,255,255,0.50),67px 62px 0 0 rgba(255,255,255,0.80),181px 469px 0 0 rgba(255,255,255,0.80),298px 529px 0 0 rgba(255,255,255,0.50),256px 133px 0 0 rgba(255,255,255,0.60),77px 536px 0 0 rgba(255,255,255,0.60),9px 450px 0 0 rgba(255,255,255,0.30),311px 4px 0 0 rgba(255,255,255,0.30),88px 144px 0 0 rgba(255,255,255,0.50),316px 123px 0 0 rgba(255,255,255,0.60),31px 333px 0 0 rgba(255,255,255,0.80),265px 543px 0 0 rgba(255,255,255,0.60),247px 108px 0 0 rgba(255,255,255,0.60),29px 254px 0 0 rgba(255,255,255,0.30),141px 43px 0 0 rgba(255,255,255,0.20),259px 463px 0 0 rgba(255,255,255,0.60),14px 64px 0 0 rgba(255,255,255,0.50),166px 627px 0 0 rgba(255,255,255,0.60),310px 524px 0 0 rgba(255,255,255,0.30),354px 283px 0 0 rgba(255,255,255,0.50),260px 546px 0 0 rgba(255,255,255,0.50),259px 253px 0 0 rgba(255,255,255,0.80),267px 265px 0 0 rgba(255,255,255,0.60),103px 458px 0 0 rgba(255,255,255,0.30),213px 124px 0 0 rgba(255,255,255,0.50),226px 323px 0 0 rgba(255,255,255,0.20),343px 246px 0 0 rgba(255,255,255,0.50),37px 217px 0 0 rgba(255,255,255,0.80),155px 125px 0 0 rgba(255,255,255,0.30),329px 676px 0 0 rgba(255,255,255,0.40),73px 259px 0 0 rgba(255,255,255,0.30),239px 224px 0 0 rgba(255,255,255,0.80),48px 407px 0 0 rgba(255,255,255,0.50),83px 683px 0 0 rgba(255,255,255,0.30),82px 441px 0 0 rgba(255,255,255,0.60),206px 347px 0 0 rgba(255,255,255,0.50),100px 365px 0 0 rgba(255,255,255,0.40),47px 374px 0 0 rgba(255,255,255,0.20),173px 567px 0 0 rgba(255,255,255,0.50),225px 18px 0 0 rgba(255,255,255,0.50),169px 529px 0 0 rgba(255,255,255,0.60),151px 524px 0 0 rgba(255,255,255,0.20),57px 234px 0 0 rgba(255,255,255,0.20),43px 271px 0 0 rgba(255,255,255,0.40),20px 185px 0 0 rgba(255,255,255,0.40),66px 432px 0 0 rgba(255,255,255,0.80),132px 415px 0 0 rgba(255,255,255,0.30),274px 527px 0 0 rgba(255,255,255,0.60),253px 334px 0 0 rgba(255,255,255,0.20),142px 58px 0 0 rgba(255,255,255,0.80),93px 435px 0 0 rgba(255,255,255,0.20),137px 17px 0 0 rgba(255,255,255,0.80),45px 266px 0 0 rgba(255,255,255,0.20),311px 227px 0 0 rgba(255,255,255,0.20),135px 124px 0 0 rgba(255,255,255,0.50),5px 347px 0 0 rgba(255,255,255,0.60),213px 274px 0 0 rgba(255,255,255,0.60),66px 44px 0 0 rgba(255,255,255,0.60),122px 112px 0 0 rgba(255,255,255,0.30),134px 51px 0 0 rgba(255,255,255,0.30),103px 319px 0 0 rgba(255,255,255,0.80),156px 543px 0 0 rgba(255,255,255,0.30),148px 456px 0 0 rgba(255,255,255,0.60),344px 182px 0 0 rgba(255,255,255,0.40),177px 18px 0 0 rgba(255,255,255,0.40),18px 15px 0 0 rgba(255,255,255,0.20),258px 564px 0 0 rgba(255,255,255,0.30),263px 486px 0 0 rgba(255,255,255,0.30),228px 108px 0 0 rgba(255,255,255,0.80),332px 442px 0 0 rgba(255,255,255,0.80),253px 559px 0 0 rgba(255,255,255,0.50),259px 315px 0 0 rgba(255,255,255,0.80),110px 235px 0 0 rgba(255,255,255,0.40),101px 651px 0 0 rgba(255,255,255,0.30),207px 355px 0 0 rgba(255,255,255,0.20),66px 14px 0 0 rgba(255,255,255,0.20),320px 261px 0 0 rgba(255,255,255,0.50),83px 56px 0 0 rgba(255,255,255,0.20),340px 390px 0 0 rgba(255,255,255,0.60),343px 288px 0 0 rgba(255,255,255,0.60),124px 300px 0 0 rgba(255,255,255,0.20),235px 189px 0 0 rgba(255,255,255,0.30),137px 456px 0 0 rgba(255,255,255,0.20),134px 372px 0 0 rgba(255,255,255,0.40),280px 331px 0 0 rgba(255,255,255,0.30),17px 316px 0 0 rgba(255,255,255,0.30),182px 187px 0 0 rgba(255,255,255,0.20),171px 390px 0 0 rgba(255,255,255,0.20),243px 285px 0 0 rgba(255,255,255,0.60),335px 205px 0 0 rgba(255,255,255,0.30),258px 5px 0 0 rgba(255,255,255,0.20),135px 91px 0 0 rgba(255,255,255,0.30),204px 600px 0 0 rgba(255,255,255,0.20),201px 23px 0 0 rgba(255,255,255,0.40),155px 644px 0 0 rgba(255,255,255,0.30),43px 599px 0 0 rgba(255,255,255,0.60),79px 673px 0 0 rgba(255,255,255,0.80),305px 398px 0 0 rgba(255,255,255,0.40),253px 153px 0 0 rgba(255,255,255,0.40),316px 658px 0 0 rgba(255,255,255,0.30),22px 525px 0 0 rgba(255,255,255,0.80),219px 517px 0 0 rgba(255,255,255,0.30),268px 516px 0 0 rgba(255,255,255,0.60),8px 598px 0 0 rgba(255,255,255,0.80),349px 658px 0 0 rgba(255,255,255,0.30),43px 31px 0 0 rgba(255,255,255,0.20),68px 652px 0 0 rgba(255,255,255,0.40),53px 385px 0 0 rgba(255,255,255,0.50),285px 51px 0 0 rgba(255,255,255,0.80),9px 641px 0 0 rgba(255,255,255,0.60),348px 250px 0 0 rgba(255,255,255,0.50),135px 3px 0 0 rgba(255,255,255,0.50),35px 515px 0 0 rgba(255,255,255,0.60),47px 675px 0 0 rgba(255,255,255,0.60),33px 485px 0 0 rgba(255,255,255,0.40),38px 271px 0 0 rgba(255,255,255,0.30),105px 236px 0 0 rgba(255,255,255,0.80),332px 471px 0 0 rgba(255,255,255,0.50),195px 78px 0 0 rgba(255,255,255,0.50),350px 294px 0 0 rgba(255,255,255,0.20),315px 647px 0 0 rgba(255,255,255,0.80),101px 79px 0 0 rgba(255,255,255,0.60),75px 339px 0 0 rgba(255,255,255,0.40),333px 311px 0 0 rgba(255,255,255,0.60),290px 136px 0 0 rgba(255,255,255,0.20),246px 62px 0 0 rgba(255,255,255,0.50),137px 688px 0 0 rgba(255,255,255,0.20),354px 222px 0 0 rgba(255,255,255,0.80),250px 297px 0 0 rgba(255,255,255,0.80),264px 292px 0 0 rgba(255,255,255,0.50),238px 477px 0 0 rgba(255,255,255,0.20),281px 204px 0 0 rgba(255,255,255,0.40),43px 484px 0 0 rgba(255,255,255,0.20),148px 469px 0 0 rgba(255,255,255,0.20),259px 460px 0 0 rgba(255,255,255,0.40),198px 214px 0 0 rgba(255,255,255,0.30),38px 595px 0 0 rgba(255,255,255,0.20),72px 536px 0 0 rgba(255,255,255,0.40),184px 135px 0 0 rgba(255,255,255,0.60),323px 520px 0 0 rgba(255,255,255,0.40),57px 373px 0 0 rgba(255,255,255,0.30),254px 497px 0 0 rgba(255,255,255,0.50),12px 162px 0 0 rgba(255,255,255,0.20),251px 461px 0 0 rgba(255,255,255,0.50),154px 144px 0 0 rgba(255,255,255,0.50),176px 385px 0 0 rgba(255,255,255,0.40),61px 339px 0 0 rgba(255,255,255,0.20),166px 346px 0 0 rgba(255,255,255,0.50),61px 200px 0 0 rgba(255,255,255,0.80),6px 296px 0 0 rgba(255,255,255,0.40),190px 66px 0 0 rgba(255,255,255,0.50),199px 603px 0 0 rgba(255,255,255,0.20),184px 438px 0 0 rgba(255,255,255,0.40),24px 287px 0 0 rgba(255,255,255,0.20),26px 677px 0 0 rgba(255,255,255,0.40),325px 152px 0 0 rgba(255,255,255,0.30),136px 446px 0 0 rgba(255,255,255,0.60),161px 194px 0 0 rgba(255,255,255,0.40),219px 29px 0 0 rgba(255,255,255,0.80),204px 567px 0 0 rgba(255,255,255,0.60),104px 82px 0 0 rgba(255,255,255,0.20),210px 461px 0 0 rgba(255,255,255,0.60),70px 659px 0 0 rgba(255,255,255,0.40),248px 50px 0 0 rgba(255,255,255,0.60),65px 174px 0 0 rgba(255,255,255,0.50),212px 351px 0 0 rgba(255,255,255,0.40),152px 261px 0 0 rgba(255,255,255,0.80),334px 266px 0 0 rgba(255,255,255,0.50),335px 244px 0 0 rgba(255,255,255,0.40),247px 570px 0 0 rgba(255,255,255,0.80),201px 122px 0 0 rgba(255,255,255,0.30),329px 165px 0 0 rgba(255,255,255,0.20),106px 512px 0 0 rgba(255,255,255,0.50),281px 225px 0 0 rgba(255,255,255,0.50),170px 460px 0 0 rgba(255,255,255,0.50),71px 560px 0 0 rgba(255,255,255,0.30),124px 92px 0 0 rgba(255,255,255,0.30),175px 569px 0 0 rgba(255,255,255,0.20),163px 244px 0 0 rgba(255,255,255,0.40),132px 583px 0 0 rgba(255,255,255,0.30),10px 422px 0 0 rgba(255,255,255,0.50),211px 536px 0 0 rgba(255,255,255,0.30),192px 276px 0 0 rgba(255,255,255,0.40),31px 510px 0 0 rgba(255,255,255,0.40),294px 368px 0 0 rgba(255,255,255,0.30),351px 515px 0 0 rgba(255,255,255,0.60),322px 221px 0 0 rgba(255,255,255,0.20),138px 254px 0 0 rgba(255,255,255,0.50),204px 661px 0 0 rgba(255,255,255,0.50),221px 319px 0 0 rgba(255,255,255,0.20),65px 33px 0 0 rgba(255,255,255,0.50),242px 601px 0 0 rgba(255,255,255,0.50),0px 74px 0 0 rgba(255,255,255,0.50),270px 479px 0 0 rgba(255,255,255,0.50),127px 111px 0 0 rgba(255,255,255,0.30),79px 155px 0 0 rgba(255,255,255,0.60),349px 111px 0 0 rgba(255,255,255,0.80),358px 662px 0 0 rgba(255,255,255,0.50),43px 564px 0 0 rgba(255,255,255,0.20),0px 128px 0 0 rgba(255,255,255,0.30),291px 38px 0 0 rgba(255,255,255,0.80),155px 131px 0 0 rgba(255,255,255,0.80),128px 540px 0 0 rgba(255,255,255,0.80),223px 114px 0 0 rgba(255,255,255,0.20),36px 307px 0 0 rgba(255,255,255,0.60),298px 196px 0 0 rgba(255,255,255,0.50),133px 228px 0 0 rgba(255,255,255,0.60),0px 10px 0 0 rgba(255,255,255,0.60),154px 471px 0 0 rgba(255,255,255,0.40),161px 660px 0 0 rgba(255,255,255,0.30),243px 538px 0 0 rgba(255,255,255,0.30),280px 252px 0 0 rgba(255,255,255,0.20),210px 665px 0 0 rgba(255,255,255,0.40),28px 22px 0 0 rgba(255,255,255,0.30),255px 690px 0 0 rgba(255,255,255,0.80),215px 83px 0 0 rgba(255,255,255,0.40),116px 683px 0 0 rgba(255,255,255,0.50),189px 232px 0 0 rgba(255,255,255,0.50),17px 346px 0 0 rgba(255,255,255,0.80),215px 371px 0 0 rgba(255,255,255,0.80),202px 202px 0 0 rgba(255,255,255,0.20),149px 516px 0 0 rgba(255,255,255,0.20),105px 507px 0 0 rgba(255,255,255,0.30),159px 198px 0 0 rgba(255,255,255,0.30),238px 226px 0 0 rgba(255,255,255,0.40),151px 111px 0 0 rgba(255,255,255,0.60),253px 624px 0 0 rgba(255,255,255,0.30),114px 496px 0 0 rgba(255,255,255,0.50),340px 57px 0 0 rgba(255,255,255,0.60),74px 402px 0 0 rgba(255,255,255,0.20),109px 24px 0 0 rgba(255,255,255,0.60),72px 425px 0 0 rgba(255,255,255,0.20),30px 188px 0 0 rgba(255,255,255,0.50),230px 321px 0 0 rgba(255,255,255,0.80),57px 81px 0 0 rgba(255,255,255,0.30),168px 195px 0 0 rgba(255,255,255,0.30),334px 537px 0 0 rgba(255,255,255,0.80),239px 32px 0 0 rgba(255,255,255,0.40),340px 387px 0 0 rgba(255,255,255,0.40),169px 453px 0 0 rgba(255,255,255,0.30),55px 2px 0 0 rgba(255,255,255,0.20),143px 82px 0 0 rgba(255,255,255,0.40),215px 126px 0 0 rgba(255,255,255,0.60),106px 389px 0 0 rgba(255,255,255,0.40),158px 442px 0 0 rgba(255,255,255,0.20),25px 484px 0 0 rgba(255,255,255,0.30),190px 554px 0 0 rgba(255,255,255,0.50),98px 331px 0 0 rgba(255,255,255,0.40),242px 31px 0 0 rgba(255,255,255,0.80),210px 253px 0 0 rgba(255,255,255,0.80),207px 41px 0 0 rgba(255,255,255,0.50),17px 475px 0 0 rgba(255,255,255,0.20),31px 263px 0 0 rgba(255,255,255,0.30),32px 620px 0 0 rgba(255,255,255,0.40),185px 278px 0 0 rgba(255,255,255,0.40),315px 44px 0 0 rgba(255,255,255,0.40),353px 324px 0 0 rgba(255,255,255,0.40),152px 3px 0 0 rgba(255,255,255,0.80),304px 649px 0 0 rgba(255,255,255,0.20),12px 239px 0 0 rgba(255,255,255,0.20),243px 476px 0 0 rgba(255,255,255,0.50),128px 440px 0 0 rgba(255,255,255,0.50),67px 508px 0 0 rgba(255,255,255,0.30),4px 310px 0 0 rgba(255,255,255,0.80),77px 621px 0 0 rgba(255,255,255,0.30),167px 327px 0 0 rgba(255,255,255,0.50),185px 610px 0 0 rgba(255,255,255,0.20),262px 202px 0 0 rgba(255,255,255,0.50),81px 253px 0 0 rgba(255,255,255,0.50),33px 665px 0 0 rgba(255,255,255,0.20),246px 565px 0 0 rgba(255,255,255,0.60),166px 164px 0 0 rgba(255,255,255,0.50),53px 73px 0 0 rgba(255,255,255,0.40),319px 86px 0 0 rgba(255,255,255,0.30),49px 431px 0 0 rgba(255,255,255,0.50),228px 177px 0 0 rgba(255,255,255,0.30),68px 426px 0 0 rgba(255,255,255,0.50),317px 690px 0 0 rgba(255,255,255,0.30),275px 680px 0 0 rgba(255,255,255,0.20),150px 300px 0 0 rgba(255,255,255,0.40),290px 274px 0 0 rgba(255,255,255,0.40),130px 266px 0 0 rgba(255,255,255,0.30),224px 253px 0 0 rgba(255,255,255,0.30),125px 241px 0 0 rgba(255,255,255,0.30),144px 592px 0 0 rgba(255,255,255,0.30),167px 66px 0 0 rgba(255,255,255,0.50),128px 251px 0 0 rgba(255,255,255,0.60),269px 236px 0 0 rgba(255,255,255,0.80),51px 669px 0 0 rgba(255,255,255,0.50),18px 104px 0 0 rgba(255,255,255,0.20),243px 236px 0 0 rgba(255,255,255,0.50),191px 41px 0 0 rgba(255,255,255,0.40),119px 122px 0 0 rgba(255,255,255,0.20),97px 614px 0 0 rgba(255,255,255,0.60),99px 76px 0 0 rgba(255,255,255,0.40),262px 182px 0 0 rgba(255,255,255,0.50),308px 266px 0 0 rgba(255,255,255,0.80),3px 108px 0 0 rgba(255,255,255,0.80),305px 634px 0 0 rgba(255,255,255,0.40),111px 38px 0 0 rgba(255,255,255,0.40),174px 144px 0 0 rgba(255,255,255,0.20),104px 261px 0 0 rgba(255,255,255,0.20),306px 667px 0 0 rgba(255,255,255,0.30),5px 335px 0 0 rgba(255,255,255,0.50),347px 380px 0 0 rgba(255,255,255,0.30),317px 319px 0 0 rgba(255,255,255,0.20),104px 32px 0 0 rgba(255,255,255,0.50),280px 495px 0 0 rgba(255,255,255,0.20),208px 103px 0 0 rgba(255,255,255,0.50),339px 563px 0 0 rgba(255,255,255,0.30),327px 546px 0 0 rgba(255,255,255,0.20),334px 167px 0 0 rgba(255,255,255,0.50),356px 277px 0 0 rgba(255,255,255,0.50),145px 683px 0 0 rgba(255,255,255,0.40),213px 52px 0 0 rgba(255,255,255,0.40),290px 365px 0 0 rgba(255,255,255,0.50),213px 18px 0 0 rgba(255,255,255,0.40),329px 201px 0 0 rgba(255,255,255,0.50),207px 208px 0 0 rgba(255,255,255,0.20),222px 160px 0 0 rgba(255,255,255,0.50),58px 92px 0 0 rgba(255,255,255,0.50),295px 373px 0 0 rgba(255,255,255,0.50),83px 133px 0 0 rgba(255,255,255,0.20),26px 564px 0 0 rgba(255,255,255,0.30),328px 406px 0 0 rgba(255,255,255,0.20),293px 637px 0 0 rgba(255,255,255,0.40),258px 175px 0 0 rgba(255,255,255,0.30),178px 290px 0 0 rgba(255,255,255,0.30),266px 175px 0 0 rgba(255,255,255,0.20),55px 392px 0 0 rgba(255,255,255,0.50),101px 308px 0 0 rgba(255,255,255,0.30),22px 494px 0 0 rgba(255,255,255,0.40),27px 622px 0 0 rgba(255,255,255,0.80),198px 88px 0 0 rgba(255,255,255,0.80),317px 164px 0 0 rgba(255,255,255,0.80),113px 635px 0 0 rgba(255,255,255,0.50),314px 200px 0 0 rgba(255,255,255,0.50),93px 578px 0 0 rgba(255,255,255,0.30),21px 409px 0 0 rgba(255,255,255,0.60),80px 392px 0 0 rgba(255,255,255,0.40),63px 153px 0 0 rgba(255,255,255,0.30),98px 42px 0 0 rgba(255,255,255,0.60),344px 39px 0 0 rgba(255,255,255,0.80),165px 120px 0 0 rgba(255,255,255,0.50),306px 466px 0 0 rgba(255,255,255,0.60),321px 313px 0 0 rgba(255,255,255,0.80),215px 315px 0 0 rgba(255,255,255,0.60),127px 435px 0 0 rgba(255,255,255,0.50),337px 376px 0 0 rgba(255,255,255,0.50),257px 448px 0 0 rgba(255,255,255,0.30),11px 3px 0 0 rgba(255,255,255,0.60),250px 476px 0 0 rgba(255,255,255,0.30),228px 633px 0 0 rgba(255,255,255,0.50),91px 484px 0 0 rgba(255,255,255,0.50),54px 68px 0 0 rgba(255,255,255,0.30),183px 440px 0 0 rgba(255,255,255,0.40),46px 452px 0 0 rgba(255,255,255,0.60),261px 672px 0 0 rgba(255,255,255,0.20),20px 651px 0 0 rgba(255,255,255,0.30),42px 321px 0 0 rgba(255,255,255,0.80),261px 81px 0 0 rgba(255,255,255,0.20),258px 386px 0 0 rgba(255,255,255,0.80),69px 26px 0 0 rgba(255,255,255,0.20),314px 112px 0 0 rgba(255,255,255,0.30),67px 503px 0 0 rgba(255,255,255,0.40),84px 226px 0 0 rgba(255,255,255,0.20),179px 625px 0 0 rgba(255,255,255,0.40),81px 331px 0 0 rgba(255,255,255,0.60),140px 467px 0 0 rgba(255,255,255,0.30),130px 514px 0 0 rgba(255,255,255,0.50),106px 606px 0 0 rgba(255,255,255,0.40),315px 518px 0 0 rgba(255,255,255,0.30),163px 381px 0 0 rgba(255,255,255,0.20),101px 186px 0 0 rgba(255,255,255,0.50),82px 651px 0 0 rgba(255,255,255,0.40),347px 335px 0 0 rgba(255,255,255,0.50),86px 270px 0 0 rgba(255,255,255,0.20),271px 49px 0 0 rgba(255,255,255,0.80),184px 463px 0 0 rgba(255,255,255,0.60),266px 593px 0 0 rgba(255,255,255,0.80),53px 258px 0 0 rgba(255,255,255,0.60),322px 403px 0 0 rgba(255,255,255,0.80),190px 271px 0 0 rgba(255,255,255,0.50),188px 591px 0 0 rgba(255,255,255,0.30),184px 338px 0 0 rgba(255,255,255,0.20),226px 235px 0 0 rgba(255,255,255,0.30),315px 49px 0 0 rgba(255,255,255,0.40),264px 259px 0 0 rgba(255,255,255,0.40),327px 599px 0 0 rgba(255,255,255,0.80),160px 1px 0 0 rgba(255,255,255,0.80),17px 226px 0 0 rgba(255,255,255,0.30),148px 630px 0 0 rgba(255,255,255,0.80),221px 427px 0 0 rgba(255,255,255,0.60),186px 48px 0 0 rgba(255,255,255,0.30),250px 232px 0 0 rgba(255,255,255,0.60),334px 46px 0 0 rgba(255,255,255,0.20),27px 2px 0 0 rgba(255,255,255,0.60),181px 311px 0 0 rgba(255,255,255,0.20),267px 365px 0 0 rgba(255,255,255,0.60),114px 423px 0 0 rgba(255,255,255,0.60),154px 603px 0 0 rgba(255,255,255,0.30),104px 375px 0 0 rgba(255,255,255,0.60),243px 162px 0 0 rgba(255,255,255,0.30),7px 249px 0 0 rgba(255,255,255,0.80),76px 461px 0 0 rgba(255,255,255,0.20),32px 653px 0 0 rgba(255,255,255,0.30),340px 276px 0 0 rgba(255,255,255,0.50),135px 11px 0 0 rgba(255,255,255,0.20),330px 575px 0 0 rgba(255,255,255,0.40),304px 661px 0 0 rgba(255,255,255,0.60),227px 616px 0 0 rgba(255,255,255,0.60),252px 254px 0 0 rgba(255,255,255,0.30),0px 45px 0 0 rgba(255,255,255,0.20),272px 25px 0 0 rgba(255,255,255,0.50),95px 243px 0 0 rgba(255,255,255,0.30),29px 107px 0 0 rgba(255,255,255,0.20),313px 564px 0 0 rgba(255,255,255,0.80),100px 145px 0 0 rgba(255,255,255,0.50),102px 530px 0 0 rgba(255,255,255,0.60),329px 519px 0 0 rgba(255,255,255,0.80),328px 425px 0 0 rgba(255,255,255,0.60),89px 520px 0 0 rgba(255,255,255,0.40),32px 307px 0 0 rgba(255,255,255,0.80),24px 489px 0 0 rgba(255,255,255,0.80),275px 6px 0 0 rgba(255,255,255,0.50),223px 476px 0 0 rgba(255,255,255,0.20),335px 463px 0 0 rgba(255,255,255,0.30),115px 107px 0 0 rgba(255,255,255,0.40),118px 659px 0 0 rgba(255,255,255,0.20),63px 343px 0 0 rgba(255,255,255,0.80),355px 269px 0 0 rgba(255,255,255,0.80),26px 272px 0 0 rgba(255,255,255,0.80),283px 695px 0 0 rgba(255,255,255,0.50),351px 535px 0 0 rgba(255,255,255,0.40),151px 657px 0 0 rgba(255,255,255,0.30),43px 519px 0 0 rgba(255,255,255,0.20),86px 266px 0 0 rgba(255,255,255,0.30),103px 163px 0 0 rgba(255,255,255,0.80),167px 196px 0 0 rgba(255,255,255,0.50),168px 615px 0 0 rgba(255,255,255,0.30),194px 645px 0 0 rgba(255,255,255,0.80),340px 549px 0 0 rgba(255,255,255,0.50),241px 543px 0 0 rgba(255,255,255,0.80),3px 27px 0 0 rgba(255,255,255,0.50),119px 584px 0 0 rgba(255,255,255,0.40),108px 400px 0 0 rgba(255,255,255,0.60),299px 79px 0 0 rgba(255,255,255,0.60),87px 148px 0 0 rgba(255,255,255,0.20),13px 114px 0 0 rgba(255,255,255,0.20),318px 165px 0 0 rgba(255,255,255,0.40),72px 29px 0 0 rgba(255,255,255,0.20),21px 141px 0 0 rgba(255,255,255,0.80),329px 649px 0 0 rgba(255,255,255,0.20),356px 69px 0 0 rgba(255,255,255,0.80),23px 67px 0 0 rgba(255,255,255,0.60),186px 204px 0 0 rgba(255,255,255,0.60),340px 67px 0 0 rgba(255,255,255,0.80),196px 109px 0 0 rgba(255,255,255,0.30),105px 208px 0 0 rgba(255,255,255,0.20),17px 35px 0 0 rgba(255,255,255,0.80),44px 646px 0 0 rgba(255,255,255,0.80),147px 488px 0 0 rgba(255,255,255,0.20),67px 100px 0 0 rgba(255,255,255,0.80),104px 301px 0 0 rgba(255,255,255,0.40),172px 433px 0 0 rgba(255,255,255,0.40),10px 359px 0 0 rgba(255,255,255,0.40),144px 49px 0 0 rgba(255,255,255,0.80),188px 328px 0 0 rgba(255,255,255,0.60),257px 487px 0 0 rgba(255,255,255,0.40),316px 31px 0 0 rgba(255,255,255,0.50),15px 446px 0 0 rgba(255,255,255,0.60),50px 355px 0 0 rgba(255,255,255,0.50),24px 550px 0 0 rgba(255,255,255,0.60),110px 93px 0 0 rgba(255,255,255,0.60),147px 174px 0 0 rgba(255,255,255,0.50),0px 536px 0 0 rgba(255,255,255,0.30),147px 55px 0 0 rgba(255,255,255,0.20),178px 502px 0 0 rgba(255,255,255,0.20),251px 188px 0 0 rgba(255,255,255,0.50),303px 355px 0 0 rgba(255,255,255,0.60),133px 591px 0 0 rgba(255,255,255,0.30),145px 219px 0 0 rgba(255,255,255,0.80),118px 510px 0 0 rgba(255,255,255,0.30),56px 651px 0 0 rgba(255,255,255,0.20),251px 574px 0 0 rgba(255,255,255,0.20),321px 334px 0 0 rgba(255,255,255,0.40),48px 410px 0 0 rgba(255,255,255,0.50),44px 432px 0 0 rgba(255,255,255,0.80),12px 380px 0 0 rgba(255,255,255,0.30),155px 269px 0 0 rgba(255,255,255,0.50),279px 513px 0 0 rgba(255,255,255,0.30),194px 645px 0 0 rgba(255,255,255,0.30),235px 129px 0 0 rgba(255,255,255,0.60),304px 619px 0 0 rgba(255,255,255,0.80),17px 356px 0 0 rgba(255,255,255,0.60),167px 534px 0 0 rgba(255,255,255,0.30),230px 677px 0 0 rgba(255,255,255,0.60),165px 173px 0 0 rgba(255,255,255,0.50),224px 263px 0 0 rgba(255,255,255,0.60),118px 129px 0 0 rgba(255,255,255,0.40),236px 658px 0 0 rgba(255,255,255,0.80),121px 519px 0 0 rgba(255,255,255,0.30),136px 308px 0 0 rgba(255,255,255,0.80),316px 158px 0 0 rgba(255,255,255,0.80),79px 253px 0 0 rgba(255,255,255,0.80),167px 617px 0 0 rgba(255,255,255,0.60),178px 164px 0 0 rgba(255,255,255,0.30),167px 193px 0 0 rgba(255,255,255,0.40),52px 168px 0 0 rgba(255,255,255,0.80),52px 200px 0 0 rgba(255,255,255,0.50),77px 151px 0 0 rgba(255,255,255,0.40),152px 445px 0 0 rgba(255,255,255,0.40),100px 111px 0 0 rgba(255,255,255,0.80),54px 287px 0 0 rgba(255,255,255,0.30),198px 475px 0 0 rgba(255,255,255,0.20),6px 408px 0 0 rgba(255,255,255,0.50),355px 227px 0 0 rgba(255,255,255,0.60),323px 303px 0 0 rgba(255,255,255,0.50),11px 145px 0 0 rgba(255,255,255,0.40),309px 414px 0 0 rgba(255,255,255,0.20),124px 440px 0 0 rgba(255,255,255,0.80),293px 601px 0 0 rgba(255,255,255,0.80),331px 431px 0 0 rgba(255,255,255,0.30),341px 668px 0 0 rgba(255,255,255,0.80),358px 597px 0 0 rgba(255,255,255,0.30),347px 185px 0 0 rgba(255,255,255,0.80),63px 464px 0 0 rgba(255,255,255,0.50),160px 266px 0 0 rgba(255,255,255,0.80),358px 100px 0 0 rgba(255,255,255,0.50),124px 409px 0 0 rgba(255,255,255,0.80),322px 160px 0 0 rgba(255,255,255,0.40),216px 494px 0 0 rgba(255,255,255,0.50),10px 636px 0 0 rgba(255,255,255,0.50),265px 691px 0 0 rgba(255,255,255,0.80),93px 670px 0 0 rgba(255,255,255,0.40),5px 398px 0 0 rgba(255,255,255,0.50),54px 39px 0 0 rgba(255,255,255,0.40),278px 223px 0 0 rgba(255,255,255,0.30),102px 531px 0 0 rgba(255,255,255,0.40),51px 588px 0 0 rgba(255,255,255,0.50),277px 209px 0 0 rgba(255,255,255,0.80),243px 524px 0 0 rgba(255,255,255,0.20),327px 378px 0 0 rgba(255,255,255,0.60),175px 420px 0 0 rgba(255,255,255,0.80),233px 215px 0 0 rgba(255,255,255,0.80),94px 401px 0 0 rgba(255,255,255,0.60),62px 628px 0 0 rgba(255,255,255,0.40),326px 57px 0 0 rgba(255,255,255,0.40),140px 391px 0 0 rgba(255,255,255,0.50),31px 13px 0 0 rgba(255,255,255,0.20),214px 430px 0 0 rgba(255,255,255,0.80),357px 691px 0 0 rgba(255,255,255,0.40),297px 271px 0 0 rgba(255,255,255,0.20),114px 310px 0 0 rgba(255,255,255,0.80),205px 539px 0 0 rgba(255,255,255,0.30),200px 473px 0 0 rgba(255,255,255,0.30),84px 132px 0 0 rgba(255,255,255,0.20),324px 197px 0 0 rgba(255,255,255,0.50),328px 575px 0 0 rgba(255,255,255,0.80),115px 149px 0 0 rgba(255,255,255,0.40),341px 654px 0 0 rgba(255,255,255,0.50),239px 301px 0 0 rgba(255,255,255,0.60),332px 128px 0 0 rgba(255,255,255,0.50),181px 235px 0 0 rgba(255,255,255,0.40),192px 259px 0 0 rgba(255,255,255,0.50),347px 190px 0 0 rgba(255,255,255,0.50),1px 287px 0 0 rgba(255,255,255,0.40),125px 670px 0 0 rgba(255,255,255,0.40),164px 491px 0 0 rgba(255,255,255,0.50),219px 638px 0 0 rgba(255,255,255,0.80),43px 675px 0 0 rgba(255,255,255,0.40),78px 310px 0 0 rgba(255,255,255,0.50),29px 87px 0 0 rgba(255,255,255,0.60),166px 143px 0 0 rgba(255,255,255,0.60),176px 648px 0 0 rgba(255,255,255,0.60),7px 673px 0 0 rgba(255,255,255,0.20),107px 73px 0 0 rgba(255,255,255,0.80),150px 256px 0 0 rgba(255,255,255,0.60),51px 592px 0 0 rgba(255,255,255,0.30),119px 190px 0 0 rgba(255,255,255,0.50),177px 156px 0 0 rgba(255,255,255,0.30),206px 547px 0 0 rgba(255,255,255,0.30),312px 622px 0 0 rgba(255,255,255,0.20),342px 561px 0 0 rgba(255,255,255,0.80),152px 202px 0 0 rgba(255,255,255,0.50),354px 218px 0 0 rgba(255,255,255,0.60),40px 449px 0 0 rgba(255,255,255,0.80),59px 568px 0 0 rgba(255,255,255,0.20),135px 429px 0 0 rgba(255,255,255,0.30),71px 484px 0 0 rgba(255,255,255,0.50),285px 59px 0 0 rgba(255,255,255,0.50),239px 147px 0 0 rgba(255,255,255,0.80),251px 252px 0 0 rgba(255,255,255,0.50),84px 552px 0 0 rgba(255,255,255,0.60),3px 164px 0 0 rgba(255,255,255,0.40),239px 576px 0 0 rgba(255,255,255,0.50),340px 303px 0 0 rgba(255,255,255,0.50),191px 436px 0 0 rgba(255,255,255,0.50),346px 77px 0 0 rgba(255,255,255,0.30),326px 369px 0 0 rgba(255,255,255,0.80),331px 29px 0 0 rgba(255,255,255,0.20),312px 46px 0 0 rgba(255,255,255,0.80),169px 96px 0 0 rgba(255,255,255,0.60),247px 496px 0 0 rgba(255,255,255,0.30),17px 218px 0 0 rgba(255,255,255,0.80),212px 640px 0 0 rgba(255,255,255,0.30),173px 96px 0 0 rgba(255,255,255,0.80),187px 349px 0 0 rgba(255,255,255,0.50),269px 567px 0 0 rgba(255,255,255,0.30),145px 445px 0 0 rgba(255,255,255,0.40),216px 257px 0 0 rgba(255,255,255,0.60),26px 296px 0 0 rgba(255,255,255,0.40),181px 505px 0 0 rgba(255,255,255,0.50),170px 515px 0 0 rgba(255,255,255,0.40),259px 353px 0 0 rgba(255,255,255,0.30),335px 504px 0 0 rgba(255,255,255,0.20),169px 196px 0 0 rgba(255,255,255,0.40),153px 130px 0 0 rgba(255,255,255,0.60),325px 89px 0 0 rgba(255,255,255,0.20),204px 567px 0 0 rgba(255,255,255,0.50),279px 587px 0 0 rgba(255,255,255,0.20),204px 307px 0 0 rgba(255,255,255,0.20),3px 47px 0 0 rgba(255,255,255,0.30),243px 623px 0 0 rgba(255,255,255,0.80),30px 512px 0 0 rgba(255,255,255,0.60),313px 385px 0 0 rgba(255,255,255,0.60),75px 641px 0 0 rgba(255,255,255,0.80),356px 610px 0 0 rgba(255,255,255,0.80),42px 217px 0 0 rgba(255,255,255,0.20),341px 648px 0 0 rgba(255,255,255,0.50),320px 178px 0 0 rgba(255,255,255,0.20),339px 185px 0 0 rgba(255,255,255,0.20),215px 103px 0 0 rgba(255,255,255,0.80),6px 377px 0 0 rgba(255,255,255,0.30),158px 575px 0 0 rgba(255,255,255,0.80),132px 309px 0 0 rgba(255,255,255,0.30),215px 35px 0 0 rgba(255,255,255,0.40),10px 441px 0 0 rgba(255,255,255,0.60),328px 592px 0 0 rgba(255,255,255,0.20),254px 581px 0 0 rgba(255,255,255,0.60),20px 121px 0 0 rgba(255,255,255,0.50),294px 414px 0 0 rgba(255,255,255,0.50),34px 14px 0 0 rgba(255,255,255,0.80),198px 608px 0 0 rgba(255,255,255,0.60),337px 159px 0 0 rgba(255,255,255,0.50),211px 561px 0 0 rgba(255,255,255,0.20),42px 659px 0 0 rgba(255,255,255,0.50),108px 155px 0 0 rgba(255,255,255,0.80),7px 437px 0 0 rgba(255,255,255,0.20),4px 685px 0 0 rgba(255,255,255,0.20),45px 223px 0 0 rgba(255,255,255,0.20),66px 483px 0 0 rgba(255,255,255,0.20),141px 582px 0 0 rgba(255,255,255,0.30),230px 191px 0 0 rgba(255,255,255,0.20),187px 148px 0 0 rgba(255,255,255,0.80),43px 300px 0 0 rgba(255,255,255,0.80),285px 510px 0 0 rgba(255,255,255,0.50),342px 260px 0 0 rgba(255,255,255,0.20),16px 11px 0 0 rgba(255,255,255,0.20),7px 666px 0 0 rgba(255,255,255,0.80),316px 81px 0 0 rgba(255,255,255,0.50),159px 319px 0 0 rgba(255,255,255,0.80),307px 169px 0 0 rgba(255,255,255,0.50),311px 61px 0 0 rgba(255,255,255,0.40),188px 588px 0 0 rgba(255,255,255,0.80),224px 481px 0 0 rgba(255,255,255,0.80),85px 148px 0 0 rgba(255,255,255,0.20),185px 660px 0 0 rgba(255,255,255,0.30),322px 427px 0 0 rgba(255,255,255,0.50),197px 463px 0 0 rgba(255,255,255,0.40),290px 341px 0 0 rgba(255,255,255,0.40),143px 62px 0 0 rgba(255,255,255,0.60),333px 614px 0 0 rgba(255,255,255,0.40),310px 15px 0 0 rgba(255,255,255,0.30),307px 316px 0 0 rgba(255,255,255,0.60),219px 252px 0 0 rgba(255,255,255,0.50),198px 385px 0 0 rgba(255,255,255,0.60),119px 462px 0 0 rgba(255,255,255,0.40),352px 1px 0 0 rgba(255,255,255,0.40),134px 274px 0 0 rgba(255,255,255,0.50),80px 600px 0 0 rgba(255,255,255,0.20),147px 144px 0 0 rgba(255,255,255,0.60),75px 280px 0 0 rgba(255,255,255,0.60),350px 511px 0 0 rgba(255,255,255,0.40),273px 87px 0 0 rgba(255,255,255,0.60),283px 496px 0 0 rgba(255,255,255,0.50),102px 239px 0 0 rgba(255,255,255,0.40),310px 58px 0 0 rgba(255,255,255,0.80),202px 476px 0 0 rgba(255,255,255,0.80),105px 260px 0 0 rgba(255,255,255,0.60),4px 394px 0 0 rgba(255,255,255,0.50),276px 89px 0 0 rgba(255,255,255,0.60),181px 64px 0 0 rgba(255,255,255,0.30),203px 593px 0 0 rgba(255,255,255,0.60),132px 534px 0 0 rgba(255,255,255,0.40),244px 518px 0 0 rgba(255,255,255,0.60),103px 193px 0 0 rgba(255,255,255,0.30),98px 94px 0 0 rgba(255,255,255,0.30),358px 296px 0 0 rgba(255,255,255,0.40),295px 577px 0 0 rgba(255,255,255,0.40),206px 529px 0 0 rgba(255,255,255,0.30),126px 45px 0 0 rgba(255,255,255,0.50),191px 108px 0 0 rgba(255,255,255,0.40),323px 474px 0 0 rgba(255,255,255,0.20),79px 323px 0 0 rgba(255,255,255,0.60),15px 353px 0 0 rgba(255,255,255,0.40),265px 621px 0 0 rgba(255,255,255,0.20),48px 34px 0 0 rgba(255,255,255,0.30),289px 497px 0 0 rgba(255,255,255,0.60),290px 218px 0 0 rgba(255,255,255,0.40),143px 436px 0 0 rgba(255,255,255,0.20),228px 607px 0 0 rgba(255,255,255,0.60),67px 260px 0 0 rgba(255,255,255,0.20),173px 205px 0 0 rgba(255,255,255,0.30),193px 85px 0 0 rgba(255,255,255,0.20),26px 35px 0 0 rgba(255,255,255,0.60),189px 469px 0 0 rgba(255,255,255,0.50),32px 612px 0 0 rgba(255,255,255,0.80),203px 122px 0 0 rgba(255,255,255,0.80),46px 263px 0 0 rgba(255,255,255,0.40),289px 238px 0 0 rgba(255,255,255,0.80),45px 685px 0 0 rgba(255,255,255,0.60),201px 187px 0 0 rgba(255,255,255,0.50),81px 379px 0 0 rgba(255,255,255,0.30),113px 176px 0 0 rgba(255,255,255,0.20),131px 360px 0 0 rgba(255,255,255,0.20),283px 28px 0 0 rgba(255,255,255,0.20),132px 525px 0 0 rgba(255,255,255,0.80),331px 495px 0 0 rgba(255,255,255,0.20),51px 148px 0 0 rgba(255,255,255,0.40),2px 203px 0 0 rgba(255,255,255,0.80),152px 603px 0 0 rgba(255,255,255,0.60),225px 668px 0 0 rgba(255,255,255,0.20),241px 331px 0 0 rgba(255,255,255,0.40),131px 399px 0 0 rgba(255,255,255,0.20),191px 492px 0 0 rgba(255,255,255,0.50),86px 451px 0 0 rgba(255,255,255,0.30),73px 693px 0 0 rgba(255,255,255,0.20),239px 199px 0 0 rgba(255,255,255,0.20),80px 225px 0 0 rgba(255,255,255,0.20),316px 382px 0 0 rgba(255,255,255,0.80),71px 457px 0 0 rgba(255,255,255,0.20),197px 22px 0 0 rgba(255,255,255,0.80),38px 463px 0 0 rgba(255,255,255,0.40),165px 239px 0 0 rgba(255,255,255,0.50),59px 643px 0 0 rgba(255,255,255,0.40),73px 339px 0 0 rgba(255,255,255,0.30),29px 184px 0 0 rgba(255,255,255,0.80),231px 566px 0 0 rgba(255,255,255,0.30),224px 152px 0 0 rgba(255,255,255,0.40),214px 421px 0 0 rgba(255,255,255,0.30),79px 26px 0 0 rgba(255,255,255,0.40),292px 303px 0 0 rgba(255,255,255,0.40),85px 266px 0 0 rgba(255,255,255,0.50),55px 325px 0 0 rgba(255,255,255,0.50),247px 116px 0 0 rgba(255,255,255,0.30),262px 58px 0 0 rgba(255,255,255,0.80),342px 216px 0 0 rgba(255,255,255,0.60),244px 293px 0 0 rgba(255,255,255,0.20),131px 206px 0 0 rgba(255,255,255,0.40),221px 267px 0 0 rgba(255,255,255,0.30),121px 99px 0 0 rgba(255,255,255,0.50),148px 425px 0 0 rgba(255,255,255,0.30),29px 300px 0 0 rgba(255,255,255,0.30),327px 16px 0 0 rgba(255,255,255,0.50),259px 349px 0 0 rgba(255,255,255,0.60),71px 453px 0 0 rgba(255,255,255,0.20),269px 293px 0 0 rgba(255,255,255,0.30),184px 445px 0 0 rgba(255,255,255,0.20),209px 223px 0 0 rgba(255,255,255,0.40),292px 185px 0 0 rgba(255,255,255,0.30),92px 534px 0 0 rgba(255,255,255,0.30),89px 201px 0 0 rgba(255,255,255,0.60),40px 89px 0 0 rgba(255,255,255,0.60),253px 280px 0 0 rgba(255,255,255,0.30),105px 140px 0 0 rgba(255,255,255,0.60),342px 643px 0 0 rgba(255,255,255,0.30),298px 315px 0 0 rgba(255,255,255,0.30),5px 67px 0 0 rgba(255,255,255,0.80),266px 417px 0 0 rgba(255,255,255,0.80),28px 530px 0 0 rgba(255,255,255,0.40),171px 288px 0 0 rgba(255,255,255,0.80),252px 92px 0 0 rgba(255,255,255,0.20),209px 488px 0 0 rgba(255,255,255,0.30),340px 272px 0 0 rgba(255,255,255,0.30),95px 576px 0 0 rgba(255,255,255,0.40),18px 167px 0 0 rgba(255,255,255,0.80),190px 588px 0 0 rgba(255,255,255,0.60),2px 364px 0 0 rgba(255,255,255,0.60),228px 528px 0 0 rgba(255,255,255,0.20),61px 365px 0 0 rgba(255,255,255,0.80),125px 328px 0 0 rgba(255,255,255,0.80),195px 590px 0 0 rgba(255,255,255,0.20),149px 110px 0 0 rgba(255,255,255,0.80),253px 457px 0 0 rgba(255,255,255,0.60),13px 543px 0 0 rgba(255,255,255,0.60),68px 21px 0 0 rgba(255,255,255,0.30),45px 229px 0 0 rgba(255,255,255,0.60),93px 171px 0 0 rgba(255,255,255,0.20),159px 256px 0 0 rgba(255,255,255,0.60),15px 19px 0 0 rgba(255,255,255,0.20),357px 199px 0 0 rgba(255,255,255,0.40),9px 613px 0 0 rgba(255,255,255,0.80),295px 475px 0 0 rgba(255,255,255,0.60),122px 454px 0 0 rgba(255,255,255,0.20),179px 96px 0 0 rgba(255,255,255,0.80),91px 46px 0 0 rgba(255,255,255,0.40),63px 476px 0 0 rgba(255,255,255,0.50),299px 512px 0 0 rgba(255,255,255,0.40),56px 124px 0 0 rgba(255,255,255,0.20),207px 140px 0 0 rgba(255,255,255,0.60),303px 232px 0 0 rgba(255,255,255,0.30),75px 684px 0 0 rgba(255,255,255,0.60),236px 406px 0 0 rgba(255,255,255,0.30),9px 650px 0 0 rgba(255,255,255,0.50),355px 430px 0 0 rgba(255,255,255,0.60),308px 538px 0 0 rgba(255,255,255,0.20),202px 53px 0 0 rgba(255,255,255,0.40),173px 410px 0 0 rgba(255,255,255,0.30),171px 446px 0 0 rgba(255,255,255,0.60),164px 410px 0 0 rgba(255,255,255,0.60),27px 332px 0 0 rgba(255,255,255,0.60),75px 361px 0 0 rgba(255,255,255,0.30),216px 679px 0 0 rgba(255,255,255,0.80),5px 373px 0 0 rgba(255,255,255,0.20),271px 191px 0 0 rgba(255,255,255,0.20),166px 443px 0 0 rgba(255,255,255,0.30),258px 685px 0 0 rgba(255,255,255,0.20),115px 142px 0 0 rgba(255,255,255,0.50),203px 464px 0 0 rgba(255,255,255,0.80),23px 41px 0 0 rgba(255,255,255,0.20),328px 635px 0 0 rgba(255,255,255,0.40),347px 638px 0 0 rgba(255,255,255,0.40),321px 555px 0 0 rgba(255,255,255,0.20),318px 102px 0 0 rgba(255,255,255,0.40),62px 532px 0 0 rgba(255,255,255,0.20),222px 242px 0 0 rgba(255,255,255,0.20),147px 115px 0 0 rgba(255,255,255,0.40),177px 663px 0 0 rgba(255,255,255,0.30),61px 61px 0 0 rgba(255,255,255,0.60),263px 274px 0 0 rgba(255,255,255,0.20),238px 604px 0 0 rgba(255,255,255,0.60),75px 450px 0 0 rgba(255,255,255,0.20),261px 134px 0 0 rgba(255,255,255,0.40),208px 591px 0 0 rgba(255,255,255,0.40),140px 249px 0 0 rgba(255,255,255,0.80),44px 559px 0 0 rgba(255,255,255,0.40),232px 624px 0 0 rgba(255,255,255,0.80),291px 226px 0 0 rgba(255,255,255,0.80),197px 206px 0 0 rgba(255,255,255,0.60),187px 471px 0 0 rgba(255,255,255,0.60),155px 627px 0 0 rgba(255,255,255,0.50),240px 317px 0 0 rgba(255,255,255,0.20),124px 341px 0 0 rgba(255,255,255,0.30),96px 524px 0 0 rgba(255,255,255,0.60),196px 599px 0 0 rgba(255,255,255,0.50),6px 361px 0 0 rgba(255,255,255,0.30),122px 331px 0 0 rgba(255,255,255,0.60),166px 503px 0 0 rgba(255,255,255,0.40),145px 221px 0 0 rgba(255,255,255,0.40),29px 22px 0 0 rgba(255,255,255,0.30),282px 68px 0 0 rgba(255,255,255,0.60),178px 450px 0 0 rgba(255,255,255,0.80),31px 529px 0 0 rgba(255,255,255,0.50),225px 362px 0 0 rgba(255,255,255,0.80),55px 533px 0 0 rgba(255,255,255,0.30),346px 158px 0 0 rgba(255,255,255,0.50),172px 684px 0 0 rgba(255,255,255,0.40),71px 691px 0 0 rgba(255,255,255,0.30),315px 625px 0 0 rgba(255,255,255,0.40),265px 97px 0 0 rgba(255,255,255,0.80),243px 275px 0 0 rgba(255,255,255,0.80),323px 130px 0 0 rgba(255,255,255,0.50),52px 4px 0 0 rgba(255,255,255,0.50),281px 599px 0 0 rgba(255,255,255,0.20),254px 407px 0 0 rgba(255,255,255,0.60),76px 427px 0 0 rgba(255,255,255,0.40),318px 621px 0 0 rgba(255,255,255,0.20),194px 463px 0 0 rgba(255,255,255,0.80),234px 294px 0 0 rgba(255,255,255,0.80),180px 299px 0 0 rgba(255,255,255,0.40),200px 538px 0 0 rgba(255,255,255,0.60),304px 393px 0 0 rgba(255,255,255,0.80),164px 6px 0 0 rgba(255,255,255,0.80),255px 389px 0 0 rgba(255,255,255,0.50),153px 188px 0 0 rgba(255,255,255,0.60),155px 148px 0 0 rgba(255,255,255,0.50),294px 386px 0 0 rgba(255,255,255,0.60),118px 90px 0 0 rgba(255,255,255,0.40),165px 622px 0 0 rgba(255,255,255,0.30),166px 209px 0 0 rgba(255,255,255,0.50),5px 26px 0 0 rgba(255,255,255,0.20),131px 578px 0 0 rgba(255,255,255,0.50),153px 549px 0 0 rgba(255,255,255,0.40),275px 634px 0 0 rgba(255,255,255,0.50),264px 529px 0 0 rgba(255,255,255,0.80),350px 440px 0 0 rgba(255,255,255,0.50),237px 366px 0 0 rgba(255,255,255,0.20),304px 692px 0 0 rgba(255,255,255,0.40),231px 10px 0 0 rgba(255,255,255,0.80),34px 537px 0 0 rgba(255,255,255,0.30),50px 419px 0 0 rgba(255,255,255,0.40),256px 410px 0 0 rgba(255,255,255,0.80),287px 587px 0 0 rgba(255,255,255,0.30),96px 431px 0 0 rgba(255,255,255,0.50),205px 450px 0 0 rgba(255,255,255,0.60),300px 351px 0 0 rgba(255,255,255,0.80),271px 94px 0 0 rgba(255,255,255,0.30),185px 325px 0 0 rgba(255,255,255,0.40),38px 318px 0 0 rgba(255,255,255,0.60),89px 113px 0 0 rgba(255,255,255,0.80),150px 351px 0 0 rgba(255,255,255,0.60),215px 646px 0 0 rgba(255,255,255,0.30),268px 296px 0 0 rgba(255,255,255,0.60),106px 517px 0 0 rgba(255,255,255,0.30),211px 186px 0 0 rgba(255,255,255,0.20),322px 578px 0 0 rgba(255,255,255,0.60),54px 361px 0 0 rgba(255,255,255,0.60),323px 651px 0 0 rgba(255,255,255,0.80),21px 421px 0 0 rgba(255,255,255,0.20),1px 314px 0 0 rgba(255,255,255,0.80),353px 566px 0 0 rgba(255,255,255,0.20),155px 407px 0 0 rgba(255,255,255,0.20),300px 15px 0 0 rgba(255,255,255,0.80),15px 201px 0 0 rgba(255,255,255,0.30),254px 566px 0 0 rgba(255,255,255,0.60),136px 662px 0 0 rgba(255,255,255,0.60),263px 147px 0 0 rgba(255,255,255,0.60),101px 420px 0 0 rgba(255,255,255,0.60),62px 148px 0 0 rgba(255,255,255,0.30),265px 521px 0 0 rgba(255,255,255,0.20),14px 102px 0 0 rgba(255,255,255,0.20),87px 535px 0 0 rgba(255,255,255,0.50),239px 627px 0 0 rgba(255,255,255,0.50),31px 665px 0 0 rgba(255,255,255,0.20),350px 592px 0 0 rgba(255,255,255,0.40),73px 243px 0 0 rgba(255,255,255,0.40),141px 173px 0 0 rgba(255,255,255,0.20),136px 643px 0 0 rgba(255,255,255,0.20),298px 64px 0 0 rgba(255,255,255,0.40),98px 460px 0 0 rgba(255,255,255,0.60),197px 20px 0 0 rgba(255,255,255,0.20),112px 405px 0 0 rgba(255,255,255,0.60),22px 450px 0 0 rgba(255,255,255,0.20),317px 244px 0 0 rgba(255,255,255,0.30),114px 45px 0 0 rgba(255,255,255,0.30),300px 177px 0 0 rgba(255,255,255,0.40),3px 466px 0 0 rgba(255,255,255,0.40),214px 617px 0 0 rgba(255,255,255,0.40),253px 69px 0 0 rgba(255,255,255,0.30),346px 399px 0 0 rgba(255,255,255,0.80),299px 226px 0 0 rgba(255,255,255,0.50),158px 408px 0 0 rgba(255,255,255,0.80),248px 22px 0 0 rgba(255,255,255,0.30),44px 177px 0 0 rgba(255,255,255,0.30),183px 388px 0 0 rgba(255,255,255,0.30),3px 297px 0 0 rgba(255,255,255,0.50),287px 371px 0 0 rgba(255,255,255,0.20),171px 546px 0 0 rgba(255,255,255,0.50),171px 412px 0 0 rgba(255,255,255,0.80),33px 126px 0 0 rgba(255,255,255,0.50),179px 567px 0 0 rgba(255,255,255,0.30),198px 195px 0 0 rgba(255,255,255,0.50),145px 352px 0 0 rgba(255,255,255,0.30),223px 35px 0 0 rgba(255,255,255,0.40),340px 25px 0 0 rgba(255,255,255,0.40),79px 247px 0 0 rgba(255,255,255,0.80),66px 94px 0 0 rgba(255,255,255,0.30),138px 557px 0 0 rgba(255,255,255,0.30),284px 453px 0 0 rgba(255,255,255,0.50),122px 163px 0 0 rgba(255,255,255,0.40),180px 221px 0 0 rgba(255,255,255,0.80),207px 385px 0 0 rgba(255,255,255,0.80),297px 213px 0 0 rgba(255,255,255,0.40),243px 516px 0 0 rgba(255,255,255,0.30),116px 463px 0 0 rgba(255,255,255,0.80),67px 267px 0 0 rgba(255,255,255,0.60),225px 601px 0 0 rgba(255,255,255,0.40),273px 252px 0 0 rgba(255,255,255,0.50),311px 522px 0 0 rgba(255,255,255,0.30),64px 125px 0 0 rgba(255,255,255,0.80),262px 93px 0 0 rgba(255,255,255,0.60),138px 394px 0 0 rgba(255,255,255,0.20),336px 581px 0 0 rgba(255,255,255,0.30),159px 15px 0 0 rgba(255,255,255,0.50),44px 181px 0 0 rgba(255,255,255,0.30),164px 192px 0 0 rgba(255,255,255,0.80),55px 69px 0 0 rgba(255,255,255,0.60),185px 512px 0 0 rgba(255,255,255,0.40),98px 67px 0 0 rgba(255,255,255,0.80),159px 90px 0 0 rgba(255,255,255,0.30),147px 129px 0 0 rgba(255,255,255,0.80),204px 289px 0 0 rgba(255,255,255,0.40),206px 475px 0 0 rgba(255,255,255,0.80),321px 135px 0 0 rgba(255,255,255,0.40),90px 30px 0 0 rgba(255,255,255,0.40),347px 679px 0 0 rgba(255,255,255,0.80),179px 422px 0 0 rgba(255,255,255,0.20),337px 473px 0 0 rgba(255,255,255,0.30),205px 360px 0 0 rgba(255,255,255,0.80),50px 186px 0 0 rgba(255,255,255,0.40),58px 277px 0 0 rgba(255,255,255,0.60),112px 693px 0 0 rgba(255,255,255,0.20),207px 40px 0 0 rgba(255,255,255,0.60),82px 441px 0 0 rgba(255,255,255,0.30),155px 159px 0 0 rgba(255,255,255,0.50),20px 565px 0 0 rgba(255,255,255,0.40),322px 653px 0 0 rgba(255,255,255,0.30),289px 233px 0 0 rgba(255,255,255,0.60),254px 533px 0 0 rgba(255,255,255,0.40),222px 686px 0 0 rgba(255,255,255,0.80),294px 357px 0 0 rgba(255,255,255,0.20),57px 671px 0 0 rgba(255,255,255,0.40),21px 599px 0 0 rgba(255,255,255,0.60),356px 48px 0 0 rgba(255,255,255,0.30),348px 113px 0 0 rgba(255,255,255,0.20),163px 215px 0 0 rgba(255,255,255,0.40),44px 427px 0 0 rgba(255,255,255,0.80),201px 630px 0 0 rgba(255,255,255,0.30),143px 539px 0 0 rgba(255,255,255,0.20),178px 434px 0 0 rgba(255,255,255,0.50),174px 515px 0 0 rgba(255,255,255,0.80),352px 643px 0 0 rgba(255,255,255,0.80),231px 520px 0 0 rgba(255,255,255,0.20),346px 210px 0 0 rgba(255,255,255,0.50),344px 524px 0 0 rgba(255,255,255,0.30),250px 193px 0 0 rgba(255,255,255,0.20),359px 572px 0 0 rgba(255,255,255,0.40),89px 559px 0 0 rgba(255,255,255,0.30),326px 241px 0 0 rgba(255,255,255,0.60),133px 255px 0 0 rgba(255,255,255,0.20),86px 366px 0 0 rgba(255,255,255,0.40),210px 94px 0 0 rgba(255,255,255,0.30),325px 318px 0 0 rgba(255,255,255,0.30),69px 498px 0 0 rgba(255,255,255,0.80),247px 243px 0 0 rgba(255,255,255,0.80),123px 6px 0 0 rgba(255,255,255,0.60),354px 455px 0 0 rgba(255,255,255,0.30),328px 359px 0 0 rgba(255,255,255,0.80),153px 136px 0 0 rgba(255,255,255,0.80),72px 601px 0 0 rgba(255,255,255,0.60),123px 341px 0 0 rgba(255,255,255,0.80),60px 561px 0 0 rgba(255,255,255,0.50),86px 693px 0 0 rgba(255,255,255,0.80),79px 613px 0 0 rgba(255,255,255,0.50),207px 211px 0 0 rgba(255,255,255,0.20),353px 296px 0 0 rgba(255,255,255,0.20),184px 498px 0 0 rgba(255,255,255,0.30),22px 61px 0 0 rgba(255,255,255,0.40),155px 201px 0 0 rgba(255,255,255,0.20),359px 316px 0 0 rgba(255,255,255,0.50),57px 165px 0 0 rgba(255,255,255,0.40),227px 479px 0 0 rgba(255,255,255,0.60),185px 296px 0 0 rgba(255,255,255,0.30),285px 73px 0 0 rgba(255,255,255,0.20),5px 479px 0 0 rgba(255,255,255,0.50),42px 339px 0 0 rgba(255,255,255,0.80),288px 270px 0 0 rgba(255,255,255,0.20),330px 500px 0 0 rgba(255,255,255,0.50),250px 194px 0 0 rgba(255,255,255,0.60),164px 8px 0 0 rgba(255,255,255,0.40),46px 659px 0 0 rgba(255,255,255,0.40),321px 628px 0 0 rgba(255,255,255,0.80),334px 257px 0 0 rgba(255,255,255,0.80),125px 80px 0 0 rgba(255,255,255,0.30),14px 25px 0 0 rgba(255,255,255,0.50),74px 303px 0 0 rgba(255,255,255,0.40),95px 653px 0 0 rgba(255,255,255,0.60),349px 172px 0 0 rgba(255,255,255,0.20),158px 631px 0 0 rgba(255,255,255,0.40),194px 188px 0 0 rgba(255,255,255,0.80),182px 327px 0 0 rgba(255,255,255,0.30),188px 139px 0 0 rgba(255,255,255,0.60),189px 259px 0 0 rgba(255,255,255,0.30),29px 42px 0 0 rgba(255,255,255,0.20),290px 643px 0 0 rgba(255,255,255,0.80),206px 51px 0 0 rgba(255,255,255,0.30),253px 433px 0 0 rgba(255,255,255,0.50),80px 306px 0 0 rgba(255,255,255,0.60),297px 641px 0 0 rgba(255,255,255,0.20),72px 232px 0 0 rgba(255,255,255,0.30),70px 453px 0 0 rgba(255,255,255,0.80),205px 91px 0 0 rgba(255,255,255,0.20),225px 490px 0 0 rgba(255,255,255,0.30),111px 381px 0 0 rgba(255,255,255,0.20),16px 625px 0 0 rgba(255,255,255,0.60),217px 146px 0 0 rgba(255,255,255,0.40),36px 677px 0 0 rgba(255,255,255,0.20),263px 431px 0 0 rgba(255,255,255,0.40),32px 449px 0 0 rgba(255,255,255,0.20),341px 180px 0 0 rgba(255,255,255,0.80),84px 387px 0 0 rgba(255,255,255,0.40),2px 453px 0 0 rgba(255,255,255,0.60),345px 356px 0 0 rgba(255,255,255,0.60),100px 480px 0 0 rgba(255,255,255,0.20),277px 331px 0 0 rgba(255,255,255,0.60),235px 438px 0 0 rgba(255,255,255,0.60),320px 158px 0 0 rgba(255,255,255,0.50),311px 634px 0 0 rgba(255,255,255,0.20),30px 692px 0 0 rgba(255,255,255,0.40),311px 674px 0 0 rgba(255,255,255,0.40),289px 584px 0 0 rgba(255,255,255,0.50),188px 492px 0 0 rgba(255,255,255,0.80),331px 140px 0 0 rgba(255,255,255,0.40),175px 543px 0 0 rgba(255,255,255,0.80),14px 193px 0 0 rgba(255,255,255,0.30),347px 458px 0 0 rgba(255,255,255,0.80),43px 150px 0 0 rgba(255,255,255,0.80),296px 380px 0 0 rgba(255,255,255,0.60),297px 426px 0 0 rgba(255,255,255,0.40),271px 246px 0 0 rgba(255,255,255,0.60),225px 405px 0 0 rgba(255,255,255,0.40),58px 232px 0 0 rgba(255,255,255,0.30),103px 561px 0 0 rgba(255,255,255,0.80),57px 226px 0 0 rgba(255,255,255,0.40),332px 97px 0 0 rgba(255,255,255,0.30),271px 686px 0 0 rgba(255,255,255,0.40),250px 232px 0 0 rgba(255,255,255,0.60),234px 231px 0 0 rgba(255,255,255,0.60),293px 115px 0 0 rgba(255,255,255,0.80),262px 602px 0 0 rgba(255,255,255,0.60),41px 417px 0 0 rgba(255,255,255,0.80),37px 450px 0 0 rgba(255,255,255,0.30),257px 563px 0 0 rgba(255,255,255,0.60),58px 641px 0 0 rgba(255,255,255,0.80),263px 104px 0 0 rgba(255,255,255,0.50),351px 401px 0 0 rgba(255,255,255,0.60),87px 196px 0 0 rgba(255,255,255,0.60),243px 95px 0 0 rgba(255,255,255,0.30),191px 633px 0 0 rgba(255,255,255,0.20),207px 242px 0 0 rgba(255,255,255,0.20),190px 42px 0 0 rgba(255,255,255,0.20),359px 608px 0 0 rgba(255,255,255,0.30),235px 307px 0 0 rgba(255,255,255,0.20),69px 436px 0 0 rgba(255,255,255,0.20),318px 206px 0 0 rgba(255,255,255,0.60),58px 363px 0 0 rgba(255,255,255,0.30),187px 349px 0 0 rgba(255,255,255,0.80),348px 11px 0 0 rgba(255,255,255,0.40),62px 245px 0 0 rgba(255,255,255,0.40),262px 537px 0 0 rgba(255,255,255,0.40),250px 44px 0 0 rgba(255,255,255,0.60),180px 102px 0 0 rgba(255,255,255,0.40),281px 335px 0 0 rgba(255,255,255,0.60),57px 34px 0 0 rgba(255,255,255,0.80),124px 260px 0 0 rgba(255,255,255,0.40),98px 457px 0 0 rgba(255,255,255,0.20),297px 450px 0 0 rgba(255,255,255,0.20),10px 499px 0 0 rgba(255,255,255,0.20),37px 264px 0 0 rgba(255,255,255,0.30),76px 567px 0 0 rgba(255,255,255,0.40),351px 685px 0 0 rgba(255,255,255,0.50),73px 602px 0 0 rgba(255,255,255,0.40),275px 275px 0 0 rgba(255,255,255,0.50),7px 25px 0 0 rgba(255,255,255,0.40),77px 498px 0 0 rgba(255,255,255,0.60),247px 32px 0 0 rgba(255,255,255,0.20),38px 186px 0 0 rgba(255,255,255,0.60),330px 695px 0 0 rgba(255,255,255,0.60),200px 487px 0 0 rgba(255,255,255,0.30),354px 459px 0 0 rgba(255,255,255,0.50),117px 625px 0 0 rgba(255,255,255,0.60),38px 369px 0 0 rgba(255,255,255,0.40),270px 221px 0 0 rgba(255,255,255,0.40),67px 603px 0 0 rgba(255,255,255,0.60),22px 216px 0 0 rgba(255,255,255,0.30),184px 478px 0 0 rgba(255,255,255,0.40),295px 479px 0 0 rgba(255,255,255,0.50),181px 321px 0 0 rgba(255,255,255,0.20),171px 593px 0 0 rgba(255,255,255,0.50),170px 232px 0 0 rgba(255,255,255,0.20),127px 470px 0 0 rgba(255,255,255,0.60),23px 646px 0 0 rgba(255,255,255,0.30),343px 147px 0 0 rgba(255,255,255,0.40),196px 279px 0 0 rgba(255,255,255,0.20),256px 268px 0 0 rgba(255,255,255,0.40),291px 587px 0 0 rgba(255,255,255,0.60),299px 142px 0 0 rgba(255,255,255,0.80),17px 574px 0 0 rgba(255,255,255,0.20),102px 436px 0 0 rgba(255,255,255,0.80),292px 649px 0 0 rgba(255,255,255,0.20),185px 288px 0 0 rgba(255,255,255,0.30),72px 73px 0 0 rgba(255,255,255,0.40),174px 371px 0 0 rgba(255,255,255,0.60),325px 251px 0 0 rgba(255,255,255,0.40),281px 415px 0 0 rgba(255,255,255,0.40),30px 345px 0 0 rgba(255,255,255,0.80),165px 493px 0 0 rgba(255,255,255,0.60),188px 249px 0 0 rgba(255,255,255,0.30),178px 154px 0 0 rgba(255,255,255,0.30),105px 7px 0 0 rgba(255,255,255,0.80),232px 414px 0 0 rgba(255,255,255,0.50),202px 582px 0 0 rgba(255,255,255,0.40),86px 600px 0 0 rgba(255,255,255,0.20),73px 308px 0 0 rgba(255,255,255,0.80),157px 258px 0 0 rgba(255,255,255,0.80),292px 564px 0 0 rgba(255,255,255,0.80),174px 75px 0 0 rgba(255,255,255,0.30),298px 81px 0 0 rgba(255,255,255,0.60),91px 311px 0 0 rgba(255,255,255,0.60),180px 479px 0 0 rgba(255,255,255,0.40),353px 438px 0 0 rgba(255,255,255,0.80),34px 496px 0 0 rgba(255,255,255,0.40),89px 282px 0 0 rgba(255,255,255,0.40),279px 23px 0 0 rgba(255,255,255,0.30),320px 274px 0 0 rgba(255,255,255,0.30),10px 223px 0 0 rgba(255,255,255,0.20),204px 458px 0 0 rgba(255,255,255,0.30),308px 289px 0 0 rgba(255,255,255,0.60),331px 101px 0 0 rgba(255,255,255,0.30),123px 58px 0 0 rgba(255,255,255,0.30),307px 49px 0 0 rgba(255,255,255,0.20),37px 589px 0 0 rgba(255,255,255,0.40),69px 5px 0 0 rgba(255,255,255,0.30),138px 549px 0 0 rgba(255,255,255,0.80),7px 655px 0 0 rgba(255,255,255,0.40),14px 217px 0 0 rgba(255,255,255,0.40),167px 27px 0 0 rgba(255,255,255,0.80),248px 415px 0 0 rgba(255,255,255,0.60),347px 345px 0 0 rgba(255,255,255,0.30),29px 424px 0 0 rgba(255,255,255,0.20),44px 641px 0 0 rgba(255,255,255,0.60),171px 506px 0 0 rgba(255,255,255,0.60),204px 263px 0 0 rgba(255,255,255,0.50),6px 26px 0 0 rgba(255,255,255,0.40),288px 669px 0 0 rgba(255,255,255,0.40),28px 425px 0 0 rgba(255,255,255,0.60),168px 160px 0 0 rgba(255,255,255,0.20),9px 159px 0 0 rgba(255,255,255,0.30),73px 542px 0 0 rgba(255,255,255,0.20),183px 370px 0 0 rgba(255,255,255,0.50),176px 551px 0 0 rgba(255,255,255,0.80),301px 568px 0 0 rgba(255,255,255,0.30),336px 616px 0 0 rgba(255,255,255,0.60),169px 235px 0 0 rgba(255,255,255,0.80),316px 264px 0 0 rgba(255,255,255,0.80),244px 32px 0 0 rgba(255,255,255,0.80),158px 667px 0 0 rgba(255,255,255,0.60),232px 572px 0 0 rgba(255,255,255,0.40),185px 535px 0 0 rgba(255,255,255,0.60),140px 135px 0 0 rgba(255,255,255,0.40),4px 571px 0 0 rgba(255,255,255,0.50),51px 671px 0 0 rgba(255,255,255,0.40),77px 643px 0 0 rgba(255,255,255,0.30),205px 92px 0 0 rgba(255,255,255,0.20),319px 137px 0 0 rgba(255,255,255,0.20),30px 556px 0 0 rgba(255,255,255,0.60),104px 568px 0 0 rgba(255,255,255,0.30),132px 620px 0 0 rgba(255,255,255,0.40),76px 181px 0 0 rgba(255,255,255,0.80),82px 541px 0 0 rgba(255,255,255,0.20),179px 248px 0 0 rgba(255,255,255,0.50),255px 218px 0 0 rgba(255,255,255,0.80),176px 398px 0 0 rgba(255,255,255,0.50),108px 331px 0 0 rgba(255,255,255,0.20),55px 675px 0 0 rgba(255,255,255,0.80),7px 67px 0 0 rgba(255,255,255,0.80),205px 690px 0 0 rgba(255,255,255,0.40),30px 233px 0 0 rgba(255,255,255,0.60),192px 419px 0 0 rgba(255,255,255,0.50),336px 642px 0 0 rgba(255,255,255,0.30),15px 257px 0 0 rgba(255,255,255,0.20),134px 444px 0 0 rgba(255,255,255,0.30),118px 362px 0 0 rgba(255,255,255,0.30),166px 435px 0 0 rgba(255,255,255,0.80),142px 305px 0 0 rgba(255,255,255,0.50),110px 583px 0 0 rgba(255,255,255,0.30),244px 273px 0 0 rgba(255,255,255,0.30),153px 289px 0 0 rgba(255,255,255,0.20),169px 4px 0 0 rgba(255,255,255,0.50),127px 165px 0 0 rgba(255,255,255,0.40),349px 624px 0 0 rgba(255,255,255,0.60),231px 217px 0 0 rgba(255,255,255,0.60),26px 214px 0 0 rgba(255,255,255,0.80),184px 47px 0 0 rgba(255,255,255,0.50),93px 445px 0 0 rgba(255,255,255,0.30),152px 25px 0 0 rgba(255,255,255,0.20),77px 9px 0 0 rgba(255,255,255,0.30),154px 154px 0 0 rgba(255,255,255,0.60),180px 99px 0 0 rgba(255,255,255,0.30),237px 406px 0 0 rgba(255,255,255,0.20),212px 347px 0 0 rgba(255,255,255,0.80),340px 406px 0 0 rgba(255,255,255,0.40),16px 599px 0 0 rgba(255,255,255,0.30),103px 642px 0 0 rgba(255,255,255,0.80),7px 38px 0 0 rgba(255,255,255,0.30),258px 609px 0 0 rgba(255,255,255,0.30),294px 440px 0 0 rgba(255,255,255,0.80),53px 20px 0 0 rgba(255,255,255,0.20),162px 66px 0 0 rgba(255,255,255,0.20),61px 499px 0 0 rgba(255,255,255,0.30),269px 438px 0 0 rgba(255,255,255,0.20),91px 229px 0 0 rgba(255,255,255,0.80),276px 151px 0 0 rgba(255,255,255,0.80),279px 512px 0 0 rgba(255,255,255,0.20),271px 362px 0 0 rgba(255,255,255,0.50),39px 357px 0 0 rgba(255,255,255,0.30),114px 74px 0 0 rgba(255,255,255,0.40),90px 15px 0 0 rgba(255,255,255,0.40),137px 70px 0 0 rgba(255,255,255,0.20),100px 520px 0 0 rgba(255,255,255,0.20),208px 569px 0 0 rgba(255,255,255,0.40),136px 10px 0 0 rgba(255,255,255,0.40),352px 42px 0 0 rgba(255,255,255,0.80),232px 557px 0 0 rgba(255,255,255,0.40),280px 338px 0 0 rgba(255,255,255,0.80),210px 275px 0 0 rgba(255,255,255,0.50),216px 325px 0 0 rgba(255,255,255,0.60),214px 392px 0 0 rgba(255,255,255,0.30),198px 394px 0 0 rgba(255,255,255,0.50),73px 650px 0 0 rgba(255,255,255,0.20),122px 622px 0 0 rgba(255,255,255,0.60),130px 625px 0 0 rgba(255,255,255,0.80),193px 246px 0 0 rgba(255,255,255,0.30),339px 118px 0 0 rgba(255,255,255,0.20),317px 34px 0 0 rgba(255,255,255,0.80),25px 415px 0 0 rgba(255,255,255,0.80),285px 332px 0 0 rgba(255,255,255,0.80),330px 453px 0 0 rgba(255,255,255,0.60),342px 323px 0 0 rgba(255,255,255,0.50),295px 0px 0 0 rgba(255,255,255,0.50),331px 481px 0 0 rgba(255,255,255,0.60),175px 606px 0 0 rgba(255,255,255,0.60),194px 240px 0 0 rgba(255,255,255,0.80),193px 363px 0 0 rgba(255,255,255,0.80),32px 402px 0 0 rgba(255,255,255,0.60),136px 627px 0 0 rgba(255,255,255,0.80),346px 329px 0 0 rgba(255,255,255,0.20),321px 556px 0 0 rgba(255,255,255,0.80),114px 627px 0 0 rgba(255,255,255,0.40),134px 484px 0 0 rgba(255,255,255,0.80),178px 534px 0 0 rgba(255,255,255,0.60),244px 584px 0 0 rgba(255,255,255,0.30),72px 67px 0 0 rgba(255,255,255,0.60),186px 536px 0 0 rgba(255,255,255,0.30),270px 173px 0 0 rgba(255,255,255,0.40),122px 689px 0 0 rgba(255,255,255,0.30),78px 677px 0 0 rgba(255,255,255,0.50),90px 655px 0 0 rgba(255,255,255,0.80),22px 329px 0 0 rgba(255,255,255,0.50),185px 438px 0 0 rgba(255,255,255,0.20),209px 157px 0 0 rgba(255,255,255,0.80),128px 384px 0 0 rgba(255,255,255,0.20),186px 365px 0 0 rgba(255,255,255,0.80),267px 533px 0 0 rgba(255,255,255,0.40),231px 678px 0 0 rgba(255,255,255,0.20),140px 405px 0 0 rgba(255,255,255,0.40),228px 114px 0 0 rgba(255,255,255,0.50),324px 489px 0 0 rgba(255,255,255,0.80),89px 529px 0 0 rgba(255,255,255,0.30),3px 133px 0 0 rgba(255,255,255,0.40),250px 533px 0 0 rgba(255,255,255,0.80),121px 637px 0 0 rgba(255,255,255,0.40),267px 348px 0 0 rgba(255,255,255,0.50),129px 18px 0 0 rgba(255,255,255,0.60),102px 0px 0 0 rgba(255,255,255,0.60),132px 59px 0 0 rgba(255,255,255,0.60),91px 313px 0 0 rgba(255,255,255,0.80),278px 281px 0 0 rgba(255,255,255,0.40),130px 247px 0 0 rgba(255,255,255,0.40),224px 93px 0 0 rgba(255,255,255,0.60),325px 505px 0 0 rgba(255,255,255,0.20),103px 131px 0 0 rgba(255,255,255,0.50),148px 632px 0 0 rgba(255,255,255,0.40),22px 453px 0 0 rgba(255,255,255,0.50),187px 42px 0 0 rgba(255,255,255,0.80),151px 417px 0 0 rgba(255,255,255,0.50),331px 622px 0 0 rgba(255,255,255,0.40),180px 244px 0 0 rgba(255,255,255,0.50),296px 132px 0 0 rgba(255,255,255,0.60),98px 594px 0 0 rgba(255,255,255,0.40),32px 681px 0 0 rgba(255,255,255,0.30),168px 72px 0 0 rgba(255,255,255,0.20),228px 388px 0 0 rgba(255,255,255,0.50),269px 424px 0 0 rgba(255,255,255,0.50),329px 26px 0 0 rgba(255,255,255,0.20),303px 577px 0 0 rgba(255,255,255,0.50),236px 446px 0 0 rgba(255,255,255,0.50),242px 180px 0 0 rgba(255,255,255,0.20),225px 407px 0 0 rgba(255,255,255,0.50),69px 524px 0 0 rgba(255,255,255,0.20),343px 237px 0 0 rgba(255,255,255,0.80),102px 411px 0 0 rgba(255,255,255,0.60),20px 301px 0 0 rgba(255,255,255,0.60),169px 396px 0 0 rgba(255,255,255,0.50),60px 92px 0 0 rgba(255,255,255,0.30),39px 584px 0 0 rgba(255,255,255,0.20),52px 508px 0 0 rgba(255,255,255,0.20),110px 577px 0 0 rgba(255,255,255,0.50),28px 204px 0 0 rgba(255,255,255,0.80),171px 494px 0 0 rgba(255,255,255,0.20),281px 427px 0 0 rgba(255,255,255,0.60),71px 416px 0 0 rgba(255,255,255,0.20),320px 149px 0 0 rgba(255,255,255,0.40),171px 194px 0 0 rgba(255,255,255,0.60),3px 190px 0 0 rgba(255,255,255,0.60),140px 532px 0 0 rgba(255,255,255,0.40),44px 320px 0 0 rgba(255,255,255,0.50),130px 679px 0 0 rgba(255,255,255,0.40),284px 404px 0 0 rgba(255,255,255,0.60),215px 52px 0 0 rgba(255,255,255,0.40),155px 254px 0 0 rgba(255,255,255,0.50),223px 552px 0 0 rgba(255,255,255,0.40),156px 206px 0 0 rgba(255,255,255,0.30),26px 212px 0 0 rgba(255,255,255,0.60),333px 382px 0 0 rgba(255,255,255,0.50),336px 500px 0 0 rgba(255,255,255,0.80),298px 144px 0 0 rgba(255,255,255,0.40),174px 205px 0 0 rgba(255,255,255,0.50),284px 679px 0 0 rgba(255,255,255,0.20),160px 8px 0 0 rgba(255,255,255,0.60),34px 418px 0 0 rgba(255,255,255,0.60),165px 36px 0 0 rgba(255,255,255,0.40),112px 449px 0 0 rgba(255,255,255,0.40),102px 214px 0 0 rgba(255,255,255,0.60),312px 465px 0 0 rgba(255,255,255,0.50),227px 208px 0 0 rgba(255,255,255,0.30),29px 184px 0 0 rgba(255,255,255,0.50),327px 127px 0 0 rgba(255,255,255,0.20),70px 73px 0 0 rgba(255,255,255,0.60),254px 184px 0 0 rgba(255,255,255,0.20),287px 168px 0 0 rgba(255,255,255,0.50),113px 690px 0 0 rgba(255,255,255,0.80),345px 301px 0 0 rgba(255,255,255,0.30),273px 162px 0 0 rgba(255,255,255,0.30),105px 528px 0 0 rgba(255,255,255,0.20),238px 97px 0 0 rgba(255,255,255,0.30),46px 51px 0 0 rgba(255,255,255,0.50),114px 674px 0 0 rgba(255,255,255,0.40),226px 434px 0 0 rgba(255,255,255,0.30),29px 136px 0 0 rgba(255,255,255,0.20),81px 457px 0 0 rgba(255,255,255,0.40),119px 596px 0 0 rgba(255,255,255,0.40),287px 157px 0 0 rgba(255,255,255,0.40),132px 332px 0 0 rgba(255,255,255,0.60),109px 155px 0 0 rgba(255,255,255,0.80),118px 400px 0 0 rgba(255,255,255,0.20),167px 389px 0 0 rgba(255,255,255,0.30),328px 298px 0 0 rgba(255,255,255,0.30),335px 558px 0 0 rgba(255,255,255,0.80),47px 202px 0 0 rgba(255,255,255,0.50),76px 188px 0 0 rgba(255,255,255,0.50),170px 695px 0 0 rgba(255,255,255,0.50),58px 39px 0 0 rgba(255,255,255,0.40),62px 673px 0 0 rgba(255,255,255,0.30),335px 536px 0 0 rgba(255,255,255,0.60),37px 297px 0 0 rgba(255,255,255,0.50),178px 18px 0 0 rgba(255,255,255,0.50),47px 205px 0 0 rgba(255,255,255,0.50),143px 310px 0 0 rgba(255,255,255,0.60),298px 553px 0 0 rgba(255,255,255,0.20),103px 143px 0 0 rgba(255,255,255,0.50),138px 232px 0 0 rgba(255,255,255,0.60),153px 33px 0 0 rgba(255,255,255,0.60),306px 103px 0 0 rgba(255,255,255,0.20),176px 199px 0 0 rgba(255,255,255,0.30),336px 307px 0 0 rgba(255,255,255,0.20),88px 341px 0 0 rgba(255,255,255,0.40),230px 492px 0 0 rgba(255,255,255,0.30),168px 372px 0 0 rgba(255,255,255,0.30),56px 305px 0 0 rgba(255,255,255,0.20),286px 465px 0 0 rgba(255,255,255,0.20),282px 115px 0 0 rgba(255,255,255,0.30),304px 402px 0 0 rgba(255,255,255,0.50),18px 34px 0 0 rgba(255,255,255,0.20),262px 593px 0 0 rgba(255,255,255,0.20),211px 662px 0 0 rgba(255,255,255,0.80),67px 425px 0 0 rgba(255,255,255,0.60),180px 78px 0 0 rgba(255,255,255,0.40),339px 167px 0 0 rgba(255,255,255,0.40),86px 678px 0 0 rgba(255,255,255,0.20),169px 5px 0 0 rgba(255,255,255,0.80),245px 310px 0 0 rgba(255,255,255,0.30),133px 96px 0 0 rgba(255,255,255,0.20),122px 119px 0 0 rgba(255,255,255,0.30),254px 276px 0 0 rgba(255,255,255,0.60),277px 120px 0 0 rgba(255,255,255,0.40),239px 251px 0 0 rgba(255,255,255,0.30),291px 548px 0 0 rgba(255,255,255,0.20),259px 262px 0 0 rgba(255,255,255,0.40),101px 290px 0 0 rgba(255,255,255,0.50),284px 208px 0 0 rgba(255,255,255,0.30),122px 547px 0 0 rgba(255,255,255,0.60),122px 97px 0 0 rgba(255,255,255,0.20),54px 54px 0 0 rgba(255,255,255,0.50),359px 584px 0 0 rgba(255,255,255,0.30),352px 234px 0 0 rgba(255,255,255,0.20),87px 157px 0 0 rgba(255,255,255,0.40),15px 434px 0 0 rgba(255,255,255,0.50),319px 530px 0 0 rgba(255,255,255,0.20),149px 583px 0 0 rgba(255,255,255,0.20),43px 679px 0 0 rgba(255,255,255,0.60),111px 239px 0 0 rgba(255,255,255,0.30),304px 525px 0 0 rgba(255,255,255,0.80),31px 251px 0 0 rgba(255,255,255,0.20),306px 345px 0 0 rgba(255,255,255,0.20),21px 220px 0 0 rgba(255,255,255,0.60),354px 178px 0 0 rgba(255,255,255,0.40),175px 86px 0 0 rgba(255,255,255,0.50),303px 187px 0 0 rgba(255,255,255,0.20),162px 421px 0 0 rgba(255,255,255,0.50),16px 90px 0 0 rgba(255,255,255,0.30),75px 523px 0 0 rgba(255,255,255,0.80),85px 154px 0 0 rgba(255,255,255,0.40),71px 208px 0 0 rgba(255,255,255,0.30),112px 339px 0 0 rgba(255,255,255,0.80),34px 2px 0 0 rgba(255,255,255,0.50),19px 509px 0 0 rgba(255,255,255,0.60),168px 70px 0 0 rgba(255,255,255,0.60),325px 64px 0 0 rgba(255,255,255,0.30),320px 51px 0 0 rgba(255,255,255,0.40),210px 94px 0 0 rgba(255,255,255,0.80),178px 596px 0 0 rgba(255,255,255,0.30),252px 688px 0 0 rgba(255,255,255,0.80),254px 138px 0 0 rgba(255,255,255,0.40),355px 310px 0 0 rgba(255,255,255,0.20),238px 604px 0 0 rgba(255,255,255,0.30),222px 395px 0 0 rgba(255,255,255,0.80),262px 306px 0 0 rgba(255,255,255,0.80),303px 544px 0 0 rgba(255,255,255,0.80),323px 118px 0 0 rgba(255,255,255,0.20),129px 237px 0 0 rgba(255,255,255,0.30),101px 601px 0 0 rgba(255,255,255,0.50),287px 242px 0 0 rgba(255,255,255,0.50),294px 51px 0 0 rgba(255,255,255,0.50),339px 404px 0 0 rgba(255,255,255,0.80),349px 350px 0 0 rgba(255,255,255,0.50),207px 89px 0 0 rgba(255,255,255,0.30),334px 688px 0 0 rgba(255,255,255,0.40),339px 609px 0 0 rgba(255,255,255,0.50),156px 4px 0 0 rgba(255,255,255,0.40),250px 618px 0 0 rgba(255,255,255,0.20),56px 486px 0 0 rgba(255,255,255,0.50),210px 619px 0 0 rgba(255,255,255,0.40),234px 149px 0 0 rgba(255,255,255,0.40),279px 218px 0 0 rgba(255,255,255,0.20),181px 403px 0 0 rgba(255,255,255,0.50),317px 33px 0 0 rgba(255,255,255,0.40),171px 90px 0 0 rgba(255,255,255,0.40),95px 452px 0 0 rgba(255,255,255,0.50),338px 551px 0 0 rgba(255,255,255,0.30),61px 221px 0 0 rgba(255,255,255,0.80),321px 42px 0 0 rgba(255,255,255,0.50),94px 399px 0 0 rgba(255,255,255,0.40),170px 154px 0 0 rgba(255,255,255,0.40),85px 229px 0 0 rgba(255,255,255,0.40),312px 403px 0 0 rgba(255,255,255,0.40),255px 326px 0 0 rgba(255,255,255,0.60),310px 193px 0 0 rgba(255,255,255,0.30),200px 539px 0 0 rgba(255,255,255,0.20),0px 179px 0 0 rgba(255,255,255,0.20),125px 465px 0 0 rgba(255,255,255,0.60),336px 256px 0 0 rgba(255,255,255,0.80),180px 692px 0 0 rgba(255,255,255,0.20),282px 526px 0 0 rgba(255,255,255,0.80),192px 138px 0 0 rgba(255,255,255,0.40),341px 426px 0 0 rgba(255,255,255,0.20),263px 638px 0 0 rgba(255,255,255,0.40),227px 272px 0 0 rgba(255,255,255,0.40),185px 312px 0 0 rgba(255,255,255,0.80),323px 384px 0 0 rgba(255,255,255,0.60),346px 61px 0 0 rgba(255,255,255,0.80),255px 505px 0 0 rgba(255,255,255,0.40),354px 18px 0 0 rgba(255,255,255,0.20),349px 121px 0 0 rgba(255,255,255,0.60),193px 458px 0 0 rgba(255,255,255,0.40),262px 155px 0 0 rgba(255,255,255,0.80),310px 469px 0 0 rgba(255,255,255,0.20),166px 494px 0 0 rgba(255,255,255,0.30),3px 277px 0 0 rgba(255,255,255,0.30),96px 601px 0 0 rgba(255,255,255,0.60),260px 47px 0 0 rgba(255,255,255,0.50),88px 603px 0 0 rgba(255,255,255,0.80),143px 642px 0 0 rgba(255,255,255,0.30),149px 557px 0 0 rgba(255,255,255,0.20),215px 561px 0 0 rgba(255,255,255,0.50),332px 86px 0 0 rgba(255,255,255,0.80),327px 389px 0 0 rgba(255,255,255,0.50),184px 284px 0 0 rgba(255,255,255,0.40),82px 588px 0 0 rgba(255,255,255,0.50),24px 545px 0 0 rgba(255,255,255,0.40),71px 205px 0 0 rgba(255,255,255,0.60),31px 166px 0 0 rgba(255,255,255,0.40),266px 174px 0 0 rgba(255,255,255,0.80),159px 54px 0 0 rgba(255,255,255,0.60),152px 392px 0 0 rgba(255,255,255,0.40),355px 191px 0 0 rgba(255,255,255,0.40),158px 486px 0 0 rgba(255,255,255,0.30),317px 328px 0 0 rgba(255,255,255,0.50),206px 111px 0 0 rgba(255,255,255,0.80),133px 370px 0 0 rgba(255,255,255,0.50),163px 394px 0 0 rgba(255,255,255,0.50),136px 115px 0 0 rgba(255,255,255,0.30),318px 461px 0 0 rgba(255,255,255,0.60),209px 652px 0 0 rgba(255,255,255,0.30),161px 45px 0 0 rgba(255,255,255,0.30),142px 548px 0 0 rgba(255,255,255,0.50),338px 572px 0 0 rgba(255,255,255,0.80),210px 78px 0 0 rgba(255,255,255,0.40),200px 371px 0 0 rgba(255,255,255,0.80),202px 542px 0 0 rgba(255,255,255,0.40),322px 124px 0 0 rgba(255,255,255,0.40),230px 12px 0 0 rgba(255,255,255,0.20),272px 580px 0 0 rgba(255,255,255,0.40),181px 616px 0 0 rgba(255,255,255,0.40),135px 249px 0 0 rgba(255,255,255,0.20),280px 98px 0 0 rgba(255,255,255,0.60),347px 422px 0 0 rgba(255,255,255,0.80),56px 314px 0 0 rgba(255,255,255,0.30),330px 180px 0 0 rgba(255,255,255,0.80),324px 120px 0 0 rgba(255,255,255,0.50),201px 349px 0 0 rgba(255,255,255,0.50),200px 511px 0 0 rgba(255,255,255,0.40),179px 190px 0 0 rgba(255,255,255,0.80),73px 544px 0 0 rgba(255,255,255,0.80),266px 423px 0 0 rgba(255,255,255,0.80),147px 136px 0 0 rgba(255,255,255,0.30),173px 67px 0 0 rgba(255,255,255,0.50),34px 514px 0 0 rgba(255,255,255,0.20),293px 683px 0 0 rgba(255,255,255,0.30),295px 442px 0 0 rgba(255,255,255,0.50),109px 587px 0 0 rgba(255,255,255,0.80),140px 695px 0 0 rgba(255,255,255,0.30),77px 227px 0 0 rgba(255,255,255,0.80),122px 512px 0 0 rgba(255,255,255,0.20),144px 34px 0 0 rgba(255,255,255,0.80),332px 390px 0 0 rgba(255,255,255,0.40),67px 662px 0 0 rgba(255,255,255,0.80),196px 627px 0 0 rgba(255,255,255,0.40),34px 617px 0 0 rgba(255,255,255,0.60),260px 279px 0 0 rgba(255,255,255,0.60),109px 229px 0 0 rgba(255,255,255,0.40),48px 368px 0 0 rgba(255,255,255,0.80),291px 80px 0 0 rgba(255,255,255,0.40),11px 529px 0 0 rgba(255,255,255,0.20),62px 332px 0 0 rgba(255,255,255,0.30),1px 468px 0 0 rgba(255,255,255,0.80),71px 457px 0 0 rgba(255,255,255,0.40),257px 60px 0 0 rgba(255,255,255,0.50),302px 568px 0 0 rgba(255,255,255,0.60),16px 40px 0 0 rgba(255,255,255,0.60),239px 113px 0 0 rgba(255,255,255,0.50),114px 301px 0 0 rgba(255,255,255,0.80),174px 338px 0 0 rgba(255,255,255,0.60),291px 235px 0 0 rgba(255,255,255,0.30),284px 213px 0 0 rgba(255,255,255,0.40),295px 549px 0 0 rgba(255,255,255,0.80),15px 228px 0 0 rgba(255,255,255,0.30),14px 516px 0 0 rgba(255,255,255,0.40),217px 383px 0 0 rgba(255,255,255,0.20),322px 280px 0 0 rgba(255,255,255,0.80),45px 598px 0 0 rgba(255,255,255,0.20),204px 399px 0 0 rgba(255,255,255,0.60),301px 418px 0 0 rgba(255,255,255,0.30),341px 56px 0 0 rgba(255,255,255,0.40),272px 337px 0 0 rgba(255,255,255,0.80),128px 73px 0 0 rgba(255,255,255,0.80),244px 589px 0 0 rgba(255,255,255,0.30),220px 464px 0 0 rgba(255,255,255,0.80),316px 465px 0 0 rgba(255,255,255,0.30),174px 630px 0 0 rgba(255,255,255,0.30),57px 412px 0 0 rgba(255,255,255,0.30),144px 198px 0 0 rgba(255,255,255,0.20),264px 16px 0 0 rgba(255,255,255,0.50),101px 201px 0 0 rgba(255,255,255,0.40),103px 573px 0 0 rgba(255,255,255,0.80),151px 23px 0 0 rgba(255,255,255,0.80),313px 16px 0 0 rgba(255,255,255,0.20),181px 210px 0 0 rgba(255,255,255,0.50),6px 656px 0 0 rgba(255,255,255,0.80),322px 550px 0 0 rgba(255,255,255,0.40),285px 363px 0 0 rgba(255,255,255,0.80),83px 578px 0 0 rgba(255,255,255,0.80),161px 363px 0 0 rgba(255,255,255,0.40),53px 45px 0 0 rgba(255,255,255,0.80),89px 363px 0 0 rgba(255,255,255,0.50),15px 465px 0 0 rgba(255,255,255,0.20),175px 109px 0 0 rgba(255,255,255,0.30),186px 482px 0 0 rgba(255,255,255,0.50),42px 345px 0 0 rgba(255,255,255,0.40),243px 131px 0 0 rgba(255,255,255,0.20),270px 576px 0 0 rgba(255,255,255,0.40),260px 398px 0 0 rgba(255,255,255,0.30),181px 257px 0 0 rgba(255,255,255,0.80),10px 197px 0 0 rgba(255,255,255,0.80),142px 531px 0 0 rgba(255,255,255,0.50),196px 164px 0 0 rgba(255,255,255,0.50),68px 141px 0 0 rgba(255,255,255,0.20),56px 219px 0 0 rgba(255,255,255,0.80),299px 544px 0 0 rgba(255,255,255,0.50),14px 9px 0 0 rgba(255,255,255,0.20),237px 44px 0 0 rgba(255,255,255,0.30),293px 547px 0 0 rgba(255,255,255,0.20),165px 346px 0 0 rgba(255,255,255,0.60),286px 472px 0 0 rgba(255,255,255,0.50),327px 210px 0 0 rgba(255,255,255,0.20),124px 209px 0 0 rgba(255,255,255,0.40),195px 106px 0 0 rgba(255,255,255,0.20),302px 129px 0 0 rgba(255,255,255,0.30),225px 467px 0 0 rgba(255,255,255,0.60),299px 651px 0 0 rgba(255,255,255,0.80),225px 69px 0 0 rgba(255,255,255,0.60),27px 481px 0 0 rgba(255,255,255,0.30),204px 667px 0 0 rgba(255,255,255,0.80),122px 665px 0 0 rgba(255,255,255,0.50),354px 483px 0 0 rgba(255,255,255,0.60),72px 121px 0 0 rgba(255,255,255,0.50),306px 390px 0 0 rgba(255,255,255,0.20),358px 244px 0 0 rgba(255,255,255,0.30),2px 401px 0 0 rgba(255,255,255,0.60),114px 649px 0 0 rgba(255,255,255,0.80),331px 39px 0 0 rgba(255,255,255,0.30),48px 204px 0 0 rgba(255,255,255,0.20),19px 477px 0 0 rgba(255,255,255,0.20),205px 246px 0 0 rgba(255,255,255,0.30),344px 45px 0 0 rgba(255,255,255,0.60),326px 591px 0 0 rgba(255,255,255,0.50),134px 42px 0 0 rgba(255,255,255,0.30),239px 18px 0 0 rgba(255,255,255,0.50),53px 98px 0 0 rgba(255,255,255,0.30),73px 541px 0 0 rgba(255,255,255,0.30),315px 524px 0 0 rgba(255,255,255,0.40),54px 522px 0 0 rgba(255,255,255,0.50),1px 73px 0 0 rgba(255,255,255,0.20),284px 663px 0 0 rgba(255,255,255,0.20),257px 575px 0 0 rgba(255,255,255,0.60),313px 608px 0 0 rgba(255,255,255,0.60),39px 55px 0 0 rgba(255,255,255,0.80),279px 629px 0 0 rgba(255,255,255,0.40),234px 406px 0 0 rgba(255,255,255,0.80),3px 573px 0 0 rgba(255,255,255,0.80),106px 24px 0 0 rgba(255,255,255,0.30),259px 468px 0 0 rgba(255,255,255,0.30),62px 665px 0 0 rgba(255,255,255,0.80),106px 687px 0 0 rgba(255,255,255,0.50),56px 627px 0 0 rgba(255,255,255,0.20),279px 532px 0 0 rgba(255,255,255,0.40),346px 96px 0 0 rgba(255,255,255,0.20),122px 103px 0 0 rgba(255,255,255,0.20),188px 280px 0 0 rgba(255,255,255,0.40),158px 302px 0 0 rgba(255,255,255,0.30),252px 620px 0 0 rgba(255,255,255,0.60),171px 196px 0 0 rgba(255,255,255,0.20),40px 76px 0 0 rgba(255,255,255,0.20),58px 613px 0 0 rgba(255,255,255,0.30),266px 394px 0 0 rgba(255,255,255,0.50),208px 625px 0 0 rgba(255,255,255,0.60),332px 215px 0 0 rgba(255,255,255,0.80),40px 22px 0 0 rgba(255,255,255,0.20),15px 686px 0 0 rgba(255,255,255,0.80),69px 441px 0 0 rgba(255,255,255,0.20),92px 633px 0 0 rgba(255,255,255,0.40),226px 261px 0 0 rgba(255,255,255,0.80),68px 258px 0 0 rgba(255,255,255,0.40),178px 29px 0 0 rgba(255,255,255,0.40),195px 96px 0 0 rgba(255,255,255,0.30),226px 166px 0 0 rgba(255,255,255,0.80),335px 484px 0 0 rgba(255,255,255,0.60),166px 280px 0 0 rgba(255,255,255,0.30),6px 422px 0 0 rgba(255,255,255,0.60),10px 348px 0 0 rgba(255,255,255,0.30),278px 365px 0 0 rgba(255,255,255,0.40),0px 244px 0 0 rgba(255,255,255,0.40),40px 544px 0 0 rgba(255,255,255,0.30),53px 36px 0 0 rgba(255,255,255,0.40),217px 642px 0 0 rgba(255,255,255,0.40),187px 65px 0 0 rgba(255,255,255,0.60),62px 469px 0 0 rgba(255,255,255,0.30),108px 543px 0 0 rgba(255,255,255,0.20),332px 679px 0 0 rgba(255,255,255,0.60),125px 417px 0 0 rgba(255,255,255,0.60),353px 646px 0 0 rgba(255,255,255,0.20),331px 217px 0 0 rgba(255,255,255,0.30),147px 13px 0 0 rgba(255,255,255,0.80),133px 441px 0 0 rgba(255,255,255,0.80),60px 180px 0 0 rgba(255,255,255,0.60),224px 629px 0 0 rgba(255,255,255,0.80),85px 291px 0 0 rgba(255,255,255,0.50),127px 349px 0 0 rgba(255,255,255,0.40),14px 93px 0 0 rgba(255,255,255,0.80),107px 656px 0 0 rgba(255,255,255,0.40),316px 671px 0 0 rgba(255,255,255,0.80),302px 145px 0 0 rgba(255,255,255,0.80),35px 612px 0 0 rgba(255,255,255,0.20),355px 400px 0 0 rgba(255,255,255,0.40),39px 65px 0 0 rgba(255,255,255,0.80),34px 548px 0 0 rgba(255,255,255,0.20),37px 370px 0 0 rgba(255,255,255,0.20),72px 570px 0 0 rgba(255,255,255,0.20),252px 663px 0 0 rgba(255,255,255,0.60),352px 280px 0 0 rgba(255,255,255,0.50),91px 102px 0 0 rgba(255,255,255,0.40),155px 404px 0 0 rgba(255,255,255,0.50),356px 177px 0 0 rgba(255,255,255,0.50),48px 471px 0 0 rgba(255,255,255,0.40),165px 210px 0 0 rgba(255,255,255,0.20),198px 231px 0 0 rgba(255,255,255,0.20),106px 359px 0 0 rgba(255,255,255,0.80),171px 284px 0 0 rgba(255,255,255,0.60),5px 194px 0 0 rgba(255,255,255,0.20),45px 161px 0 0 rgba(255,255,255,0.80),338px 601px 0 0 rgba(255,255,255,0.40),338px 269px 0 0 rgba(255,255,255,0.30),23px 147px 0 0 rgba(255,255,255,0.50),49px 58px 0 0 rgba(255,255,255,0.50),130px 667px 0 0 rgba(255,255,255,0.20),291px 597px 0 0 rgba(255,255,255,0.30),31px 66px 0 0 rgba(255,255,255,0.40),7px 274px 0 0 rgba(255,255,255,0.30),181px 372px 0 0 rgba(255,255,255,0.60),90px 141px 0 0 rgba(255,255,255,0.40),128px 379px 0 0 rgba(255,255,255,0.40),85px 535px 0 0 rgba(255,255,255,0.80),57px 254px 0 0 rgba(255,255,255,0.30),146px 389px 0 0 rgba(255,255,255,0.20),114px 664px 0 0 rgba(255,255,255,0.30),112px 393px 0 0 rgba(255,255,255,0.40),123px 656px 0 0 rgba(255,255,255,0.50),134px 7px 0 0 rgba(255,255,255,0.20),50px 679px 0 0 rgba(255,255,255,0.50),189px 240px 0 0 rgba(255,255,255,0.40),15px 483px 0 0 rgba(255,255,255,0.50),249px 118px 0 0 rgba(255,255,255,0.20),235px 568px 0 0 rgba(255,255,255,0.80),251px 95px 0 0 rgba(255,255,255,0.50),60px 496px 0 0 rgba(255,255,255,0.50),88px 236px 0 0 rgba(255,255,255,0.50),225px 62px 0 0 rgba(255,255,255,0.20),97px 69px 0 0 rgba(255,255,255,0.40),184px 454px 0 0 rgba(255,255,255,0.50),122px 346px 0 0 rgba(255,255,255,0.60),29px 73px 0 0 rgba(255,255,255,0.60),113px 495px 0 0 rgba(255,255,255,0.80),110px 576px 0 0 rgba(255,255,255,0.60),192px 112px 0 0 rgba(255,255,255,0.20),221px 537px 0 0 rgba(255,255,255,0.20),122px 534px 0 0 rgba(255,255,255,0.30),261px 323px 0 0 rgba(255,255,255,0.30),51px 85px 0 0 rgba(255,255,255,0.50),135px 479px 0 0 rgba(255,255,255,0.50),67px 76px 0 0 rgba(255,255,255,0.50),323px 325px 0 0 rgba(255,255,255,0.20),105px 287px 0 0 rgba(255,255,255,0.80),184px 69px 0 0 rgba(255,255,255,0.20),243px 493px 0 0 rgba(255,255,255,0.40),92px 521px 0 0 rgba(255,255,255,0.20),321px 668px 0 0 rgba(255,255,255,0.60),12px 659px 0 0 rgba(255,255,255,0.50),351px 32px 0 0 rgba(255,255,255,0.60),331px 239px 0 0 rgba(255,255,255,0.50),340px 619px 0 0 rgba(255,255,255,0.30),333px 373px 0 0 rgba(255,255,255,0.30),198px 329px 0 0 rgba(255,255,255,0.80),21px 376px 0 0 rgba(255,255,255,0.80),333px 186px 0 0 rgba(255,255,255,0.80),116px 16px 0 0 rgba(255,255,255,0.60),234px 83px 0 0 rgba(255,255,255,0.50),111px 36px 0 0 rgba(255,255,255,0.40),224px 143px 0 0 rgba(255,255,255,0.30),155px 321px 0 0 rgba(255,255,255,0.60),102px 67px 0 0 rgba(255,255,255,0.50),12px 695px 0 0 rgba(255,255,255,0.30),6px 368px 0 0 rgba(255,255,255,0.50),119px 67px 0 0 rgba(255,255,255,0.50),191px 523px 0 0 rgba(255,255,255,0.80),251px 688px 0 0 rgba(255,255,255,0.30),318px 221px 0 0 rgba(255,255,255,0.30),240px 206px 0 0 rgba(255,255,255,0.40),233px 277px 0 0 rgba(255,255,255,0.30),164px 32px 0 0 rgba(255,255,255,0.50),90px 351px 0 0 rgba(255,255,255,0.50),342px 23px 0 0 rgba(255,255,255,0.60),191px 165px 0 0 rgba(255,255,255,0.30),0px 158px 0 0 rgba(255,255,255,0.60),132px 621px 0 0 rgba(255,255,255,0.50),243px 575px 0 0 rgba(255,255,255,0.60),197px 140px 0 0 rgba(255,255,255,0.40),123px 575px 0 0 rgba(255,255,255,0.20),140px 426px 0 0 rgba(255,255,255,0.30),70px 534px 0 0 rgba(255,255,255,0.30),297px 328px 0 0 rgba(255,255,255,0.20),85px 239px 0 0 rgba(255,255,255,0.50),85px 82px 0 0 rgba(255,255,255,0.60),231px 418px 0 0 rgba(255,255,255,0.40),291px 677px 0 0 rgba(255,255,255,0.30),77px 275px 0 0 rgba(255,255,255,0.80),208px 97px 0 0 rgba(255,255,255,0.20),223px 106px 0 0 rgba(255,255,255,0.20),148px 72px 0 0 rgba(255,255,255,0.40),89px 141px 0 0 rgba(255,255,255,0.50),37px 542px 0 0 rgba(255,255,255,0.50),153px 679px 0 0 rgba(255,255,255,0.80),262px 597px 0 0 rgba(255,255,255,0.20),228px 249px 0 0 rgba(255,255,255,0.50),336px 543px 0 0 rgba(255,255,255,0.60),348px 378px 0 0 rgba(255,255,255,0.60),285px 197px 0 0 rgba(255,255,255,0.50),38px 606px 0 0 rgba(255,255,255,0.40),292px 391px 0 0 rgba(255,255,255,0.30),354px 261px 0 0 rgba(255,255,255,0.80),121px 421px 0 0 rgba(255,255,255,0.40),268px 263px 0 0 rgba(255,255,255,0.80),37px 58px 0 0 rgba(255,255,255,0.60),349px 483px 0 0 rgba(255,255,255,0.30),344px 335px 0 0 rgba(255,255,255,0.20),227px 486px 0 0 rgba(255,255,255,0.40),347px 663px 0 0 rgba(255,255,255,0.30),238px 332px 0 0 rgba(255,255,255,0.30),220px 91px 0 0 rgba(255,255,255,0.30),277px 418px 0 0 rgba(255,255,255,0.50),68px 238px 0 0 rgba(255,255,255,0.40),184px 389px 0 0 rgba(255,255,255,0.80),253px 373px 0 0 rgba(255,255,255,0.30),113px 655px 0 0 rgba(255,255,255,0.30),136px 115px 0 0 rgba(255,255,255,0.20),261px 139px 0 0 rgba(255,255,255,0.50),315px 430px 0 0 rgba(255,255,255,0.80),39px 480px 0 0 rgba(255,255,255,0.60),232px 340px 0 0 rgba(255,255,255,0.60),277px 364px 0 0 rgba(255,255,255,0.40),223px 322px 0 0 rgba(255,255,255,0.30),246px 18px 0 0 rgba(255,255,255,0.80),346px 164px 0 0 rgba(255,255,255,0.50),189px 119px 0 0 rgba(255,255,255,0.80),149px 563px 0 0 rgba(255,255,255,0.80),104px 649px 0 0 rgba(255,255,255,0.30),303px 201px 0 0 rgba(255,255,255,0.40),154px 664px 0 0 rgba(255,255,255,0.40),83px 66px 0 0 rgba(255,255,255,0.60),232px 681px 0 0 rgba(255,255,255,0.60),23px 203px 0 0 rgba(255,255,255,0.20),304px 547px 0 0 rgba(255,255,255,0.50),287px 278px 0 0 rgba(255,255,255,0.20),35px 4px 0 0 rgba(255,255,255,0.30),43px 254px 0 0 rgba(255,255,255,0.20),88px 235px 0 0 rgba(255,255,255,0.30),135px 242px 0 0 rgba(255,255,255,0.20),12px 116px 0 0 rgba(255,255,255,0.20),45px 203px 0 0 rgba(255,255,255,0.30),240px 343px 0 0 rgba(255,255,255,0.20),267px 357px 0 0 rgba(255,255,255,0.40),149px 427px 0 0 rgba(255,255,255,0.80),245px 264px 0 0 rgba(255,255,255,0.40),28px 85px 0 0 rgba(255,255,255,0.40),83px 271px 0 0 rgba(255,255,255,0.20),32px 639px 0 0 rgba(255,255,255,0.20),356px 269px 0 0 rgba(255,255,255,0.30),168px 349px 0 0 rgba(255,255,255,0.60),251px 144px 0 0 rgba(255,255,255,0.30),309px 573px 0 0 rgba(255,255,255,0.20),78px 432px 0 0 rgba(255,255,255,0.50),151px 17px 0 0 rgba(255,255,255,0.30),159px 73px 0 0 rgba(255,255,255,0.50),48px 67px 0 0 rgba(255,255,255,0.60),77px 195px 0 0 rgba(255,255,255,0.80),231px 479px 0 0 rgba(255,255,255,0.30),318px 95px 0 0 rgba(255,255,255,0.80),241px 578px 0 0 rgba(255,255,255,0.50),70px 13px 0 0 rgba(255,255,255,0.30),298px 220px 0 0 rgba(255,255,255,0.20),324px 468px 0 0 rgba(255,255,255,0.30),132px 513px 0 0 rgba(255,255,255,0.50),267px 545px 0 0 rgba(255,255,255,0.40),29px 31px 0 0 rgba(255,255,255,0.30),12px 226px 0 0 rgba(255,255,255,0.60),148px 216px 0 0 rgba(255,255,255,0.80),353px 465px 0 0 rgba(255,255,255,0.60),98px 188px 0 0 rgba(255,255,255,0.30),159px 678px 0 0 rgba(255,255,255,0.40),67px 161px 0 0 rgba(255,255,255,0.20),115px 474px 0 0 rgba(255,255,255,0.40),348px 317px 0 0 rgba(255,255,255,0.50),161px 535px 0 0 rgba(255,255,255,0.80),156px 56px 0 0 rgba(255,255,255,0.60),161px 91px 0 0 rgba(255,255,255,0.40),25px 332px 0 0 rgba(255,255,255,0.60),121px 154px 0 0 rgba(255,255,255,0.30),322px 251px 0 0 rgba(255,255,255,0.50),15px 202px 0 0 rgba(255,255,255,0.40),61px 518px 0 0 rgba(255,255,255,0.80),266px 371px 0 0 rgba(255,255,255,0.80),243px 541px 0 0 rgba(255,255,255,0.40),38px 108px 0 0 rgba(255,255,255,0.80),35px 638px 0 0 rgba(255,255,255,0.50),223px 495px 0 0 rgba(255,255,255,0.20),129px 684px 0 0 rgba(255,255,255,0.60),113px 460px 0 0 rgba(255,255,255,0.40),244px 428px 0 0 rgba(255,255,255,0.80),190px 547px 0 0 rgba(255,255,255,0.50),161px 633px 0 0 rgba(255,255,255,0.20),53px 466px 0 0 rgba(255,255,255,0.20),326px 285px 0 0 rgba(255,255,255,0.30),19px 570px 0 0 rgba(255,255,255,0.30),32px 477px 0 0 rgba(255,255,255,0.80),317px 35px 0 0 rgba(255,255,255,0.40),336px 70px 0 0 rgba(255,255,255,0.80),174px 447px 0 0 rgba(255,255,255,0.60),43px 148px 0 0 rgba(255,255,255,0.50),357px 96px 0 0 rgba(255,255,255,0.80),26px 32px 0 0 rgba(255,255,255,0.40),343px 138px 0 0 rgba(255,255,255,0.60),54px 72px 0 0 rgba(255,255,255,0.40),83px 544px 0 0 rgba(255,255,255,0.60),208px 173px 0 0 rgba(255,255,255,0.30),88px 396px 0 0 rgba(255,255,255,0.50),173px 371px 0 0 rgba(255,255,255,0.20),124px 469px 0 0 rgba(255,255,255,0.60),59px 93px 0 0 rgba(255,255,255,0.40),197px 484px 0 0 rgba(255,255,255,0.30),94px 618px 0 0 rgba(255,255,255,0.40),238px 402px 0 0 rgba(255,255,255,0.80),103px 132px 0 0 rgba(255,255,255,0.80),99px 502px 0 0 rgba(255,255,255,0.20),262px 346px 0 0 rgba(255,255,255,0.30),14px 261px 0 0 rgba(255,255,255,0.60),240px 152px 0 0 rgba(255,255,255,0.60),164px 320px 0 0 rgba(255,255,255,0.30),174px 192px 0 0 rgba(255,255,255,0.80),214px 57px 0 0 rgba(255,255,255,0.20),118px 588px 0 0 rgba(255,255,255,0.40),5px 260px 0 0 rgba(255,255,255,0.60),20px 38px 0 0 rgba(255,255,255,0.40),116px 325px 0 0 rgba(255,255,255,0.40),187px 308px 0 0 rgba(255,255,255,0.40),316px 361px 0 0 rgba(255,255,255,0.50),193px 290px 0 0 rgba(255,255,255,0.20),116px 12px 0 0 rgba(255,255,255,0.80),210px 651px 0 0 rgba(255,255,255,0.60),125px 659px 0 0 rgba(255,255,255,0.20),87px 154px 0 0 rgba(255,255,255,0.40),129px 516px 0 0 rgba(255,255,255,0.80),166px 389px 0 0 rgba(255,255,255,0.50),157px 136px 0 0 rgba(255,255,255,0.30),276px 344px 0 0 rgba(255,255,255,0.80),28px 353px 0 0 rgba(255,255,255,0.30),163px 142px 0 0 rgba(255,255,255,0.80),346px 555px 0 0 rgba(255,255,255,0.80),24px 560px 0 0 rgba(255,255,255,0.50),173px 481px 0 0 rgba(255,255,255,0.50),109px 348px 0 0 rgba(255,255,255,0.40),127px 65px 0 0 rgba(255,255,255,0.20),60px 334px 0 0 rgba(255,255,255,0.20),13px 232px 0 0 rgba(255,255,255,0.40),36px 629px 0 0 rgba(255,255,255,0.20),254px 53px 0 0 rgba(255,255,255,0.30),236px 655px 0 0 rgba(255,255,255,0.50),159px 488px 0 0 rgba(255,255,255,0.50),158px 653px 0 0 rgba(255,255,255,0.80),295px 481px 0 0 rgba(255,255,255,0.40),176px 319px 0 0 rgba(255,255,255,0.80),180px 587px 0 0 rgba(255,255,255,0.20),307px 601px 0 0 rgba(255,255,255,0.60),35px 495px 0 0 rgba(255,255,255,0.50),213px 12px 0 0 rgba(255,255,255,0.80),116px 212px 0 0 rgba(255,255,255,0.30),185px 555px 0 0 rgba(255,255,255,0.40),337px 127px 0 0 rgba(255,255,255,0.80),291px 35px 0 0 rgba(255,255,255,0.50),302px 582px 0 0 rgba(255,255,255,0.50),12px 134px 0 0 rgba(255,255,255,0.50),47px 188px 0 0 rgba(255,255,255,0.60),148px 527px 0 0 rgba(255,255,255,0.80),182px 103px 0 0 rgba(255,255,255,0.30),309px 59px 0 0 rgba(255,255,255,0.30),187px 443px 0 0 rgba(255,255,255,0.30),194px 652px 0 0 rgba(255,255,255,0.80),39px 426px 0 0 rgba(255,255,255,0.30),167px 309px 0 0 rgba(255,255,255,0.40),263px 191px 0 0 rgba(255,255,255,0.50),279px 512px 0 0 rgba(255,255,255,0.20),342px 146px 0 0 rgba(255,255,255,0.60),193px 574px 0 0 rgba(255,255,255,0.30),93px 17px 0 0 rgba(255,255,255,0.80),282px 115px 0 0 rgba(255,255,255,0.60),185px 54px 0 0 rgba(255,255,255,0.20),106px 517px 0 0 rgba(255,255,255,0.20),257px 220px 0 0 rgba(255,255,255,0.60),236px 158px 0 0 rgba(255,255,255,0.60),109px 147px 0 0 rgba(255,255,255,0.30),323px 448px 0 0 rgba(255,255,255,0.20),217px 139px 0 0 rgba(255,255,255,0.60),352px 265px 0 0 rgba(255,255,255,0.60)"></div>
  <div class="a" style="left:0;top:22px;width:1px;height:1px;box-shadow:141px 239px 0 0.6px rgba(220,240,255,0.9),215px 221px 0 0.6px rgba(220,240,255,0.9),262px 643px 0 0.6px rgba(220,240,255,0.9),239px 55px 0 0.6px rgba(220,240,255,0.9),47px 5px 0 0.6px rgba(220,240,255,0.9),174px 169px 0 0.6px rgba(220,240,255,0.9),121px 551px 0 0.6px rgba(220,240,255,0.9),130px 237px 0 0.6px rgba(220,240,255,0.9),264px 179px 0 0.6px rgba(220,240,255,0.9),118px 617px 0 0.6px rgba(220,240,255,0.9),89px 206px 0 0.6px rgba(220,240,255,0.9),299px 112px 0 0.6px rgba(220,240,255,0.9),236px 608px 0 0.6px rgba(220,240,255,0.9),110px 279px 0 0.6px rgba(220,240,255,0.9),217px 523px 0 0.6px rgba(220,240,255,0.9),26px 500px 0 0.6px rgba(220,240,255,0.9),0px 453px 0 0.6px rgba(220,240,255,0.9),44px 71px 0 0.6px rgba(220,240,255,0.9),286px 693px 0 0.6px rgba(220,240,255,0.9),212px 145px 0 0.6px rgba(220,240,255,0.9),163px 471px 0 0.6px rgba(220,240,255,0.9),87px 654px 0 0.6px rgba(220,240,255,0.9),110px 556px 0 0.6px rgba(220,240,255,0.9),172px 418px 0 0.6px rgba(220,240,255,0.9),125px 203px 0 0.6px rgba(220,240,255,0.9),116px 165px 0 0.6px rgba(220,240,255,0.9),209px 365px 0 0.6px rgba(220,240,255,0.9),316px 446px 0 0.6px rgba(220,240,255,0.9),155px 317px 0 0.6px rgba(220,240,255,0.9),82px 650px 0 0.6px rgba(220,240,255,0.9),111px 456px 0 0.6px rgba(220,240,255,0.9),43px 145px 0 0.6px rgba(220,240,255,0.9),98px 603px 0 0.6px rgba(220,240,255,0.9),161px 127px 0 0.6px rgba(220,240,255,0.9),258px 303px 0 0.6px rgba(220,240,255,0.9)"></div>
  <!-- status bar content -->
  <div class="t" style="left:17px;top:5px;font-size:12.6px;line-height:12.6px;color:#fff">5:56</div>
  <svg style="left:47.5px;top:4.5px" width="13" height="13" viewBox="0 0 13 13"><circle cx="6.5" cy="6.5" r="5.4" fill="none" stroke="#fff" stroke-width="1.6" stroke-dasharray="1.5 1.1"/><circle cx="6.5" cy="6.5" r="4.2" fill="none" stroke="#fff" stroke-width="1.1"/><path d="M2.5 6.2 H10.5 M6.5 6.2 V10.5" stroke="#fff" stroke-width="1.1"/></svg>
  <svg style="left:295px;top:5px" width="14" height="12" viewBox="0 0 14 12"><path d="M0.3 3.5 A10 10 0 0 1 13.7 3.5 L7 11.5 Z" fill="#fff"/></svg>
  <svg style="left:308px;top:5px" width="14" height="12" viewBox="0 0 14 12"><path d="M13.5 0.5 V11.5 H2 Z" fill="#fff"/></svg>
  <svg style="left:326px;top:5px" width="8" height="12" viewBox="0 0 8 12"><path d="M2.5 0.5 H5.5 V1.5 H7.5 V11.5 H0.5 V1.5 H2.5 Z" fill="#fff"/></svg>
  <!-- app -->
  <div class="a" style="left:128.5px;top:75px;font-size:32.5px;line-height:32.5px;font-weight:bold;color:#fff;white-space:nowrap;transform-origin:0 0;transform:scaleX(0.948)">Sign In</div>
  <div class="a" style="left:9px;top:166px;width:342px;height:59px;background:rgba(60,215,222,0.38)"></div>
  <div class="a" style="left:9px;top:244px;width:342px;height:58px;background:rgba(60,215,222,0.38)"></div>
  <svg style="left:31px;top:188px" width="16" height="15" viewBox="0 0 16 15"><circle cx="8" cy="3.6" r="3.5" fill="#fff"/><path d="M0.5 14.5 V12.5 C0.5 9.5 5 8.5 8 8.5 C11 8.5 15.5 9.5 15.5 12.5 V14.5 Z" fill="#fff"/></svg>
  <div class="a" style="left:68px;top:188px;font-size:17px;line-height:17px;color:#fff;white-space:nowrap;letter-spacing:0.3px">sahil</div>
  <svg style="left:29px;top:267px" width="21" height="12" viewBox="0 0 21 12"><circle cx="5.5" cy="6" r="4.2" fill="none" stroke="#fff" stroke-width="2.6"/><path d="M9 4.6 H20.5 V7.4 H18.5 V10.5 H15.5 V7.4 H13.5 V9.5 H10.5 V7.4 H9 Z" fill="#fff"/></svg>
  <div class="a" style="left:69.0px;top:272px;width:3.8px;height:3.8px;border-radius:50%;background:#fff"></div><div class="a" style="left:74.8px;top:270px;width:3.8px;height:3.8px;border-radius:50%;background:#fff"></div><div class="a" style="left:80.5px;top:270px;width:3.8px;height:3.8px;border-radius:50%;background:#fff"></div><div class="a" style="left:86.2px;top:270px;width:3.8px;height:3.8px;border-radius:50%;background:#fff"></div><div class="a" style="left:92.0px;top:270px;width:3.8px;height:3.8px;border-radius:50%;background:#fff"></div><div class="a" style="left:97.8px;top:270px;width:3.8px;height:3.8px;border-radius:50%;background:#fff"></div>
  <div class="a" style="left:140px;top:336px;width:80px;height:33px;background:#018786;border-radius:2px;box-shadow:0 1px 2px rgba(0,0,0,0.3)"></div>
  <div class="a" style="left:159px;top:347px;font-size:13.2px;line-height:13.2px;font-weight:bold;color:#fff;letter-spacing:0.6px;white-space:nowrap">LOGIN</div>
  <div class="a" style="left:127px;top:397px;font-size:13.2px;line-height:13.2px;color:#fff;white-space:nowrap">Forgot Password?</div>
  <div class="a" style="left:137px;top:535px;font-size:13px;line-height:13px;letter-spacing:0.1px;color:#fff;white-space:nowrap">Or Sign In With</div>
  <!-- social -->
  <div class="a" style="left:78px;top:615px;width:42px;height:42px;border-radius:50%;background:#1da1f2"></div>
  <svg style="left:87px;top:625px" width="24" height="21" viewBox="0 0 24 20"><path d="M23.6 2.4 C22.7 2.8 21.8 3 20.8 3.2 C21.8 2.6 22.6 1.6 22.9 0.5 C22 1.1 20.9 1.5 19.8 1.7 C18.9 0.7 17.6 0.1 16.2 0.1 C13.5 0.1 11.3 2.3 11.3 5 C11.3 5.4 11.3 5.8 11.4 6.1 C7.3 5.9 3.7 3.9 1.3 1 C0.8 1.7 0.6 2.6 0.6 3.5 C0.6 5.2 1.5 6.7 2.8 7.6 C2 7.6 1.2 7.3 0.6 7 C0.6 9.4 2.3 11.4 4.5 11.8 C4.1 11.9 3.7 12 3.2 12 C2.9 12 2.6 12 2.3 11.9 C2.9 13.9 4.8 15.3 6.9 15.3 C5.2 16.6 3.1 17.4 0.9 17.4 C0.5 17.4 0.1 17.4 -0.2 17.3 C2 18.7 4.6 19.6 7.4 19.6 C16.2 19.6 21.1 12.2 21.1 5.8 L21.1 5.2 C22.1 4.5 22.9 3.5 23.6 2.4 Z" fill="#fff"/></svg>
  <div class="a" style="left:165px;top:614px;width:44px;height:44px;border-radius:50%;background:#fff"></div>
  <svg style="left:173px;top:622px" width="28" height="28" viewBox="0 0 48 48"><path fill="#EA4335" d="M24 9.5c3.54 0 6.710 1.220 9.210 3.600l6.850-6.850C35.9 2.380 30.470 0 24 0 14.620 0 6.510 5.380 2.560 13.220l7.980 6.190C12.430 13.720 17.740 9.500 24 9.500z"/><path fill="#4285F4" d="M46.980 24.550c0-1.570-.15-3.090-.38-4.550H24v9.020h12.940c-.58 2.960-2.260 5.480-4.780 7.180l7.730 6c4.510-4.180 7.090-10.360 7.090-17.650z"/><path fill="#FBBC05" d="M10.530 28.590c-.48-1.450-.76-2.990-.76-4.590s.27-3.140.76-4.590l-7.980-6.190C.92 16.460 0 20.120 0 24c0 3.880.92 7.540 2.560 10.780l7.970-6.190z"/><path fill="#34A853" d="M24 48c6.480 0 11.930-2.130 15.890-5.810l-7.730-6c-2.150 1.450-4.920 2.300-8.160 2.300-6.260 0-11.570-4.220-13.470-9.910l-7.980 6.190C6.510 42.620 14.620 48 24 48z"/></svg>
  <div class="a" style="left:246px;top:614px;width:44px;height:44px;border-radius:50%;background:#5a7fc5"></div>
  <svg style="left:261px;top:625px" width="15" height="23" viewBox="0 0 18 28"><path d="M11.5 28 V15.5 H15.5 L16.2 10.8 H11.5 V7.8 C11.5 6.4 11.9 5.5 13.9 5.5 H16.4 V1.3 C16 1.2 14.5 1.1 12.8 1.1 C9.2 1.1 6.8 3.3 6.8 7.3 V10.8 H2.8 V15.5 H6.8 V28 Z" fill="#fff"/></svg>
</div>
<div class="a" style="left:1525px;top:943px;width:99px;height:4px;border-radius:2px;background:#e6e6e6"></div>
<!-- /phone -->

</body></html>
